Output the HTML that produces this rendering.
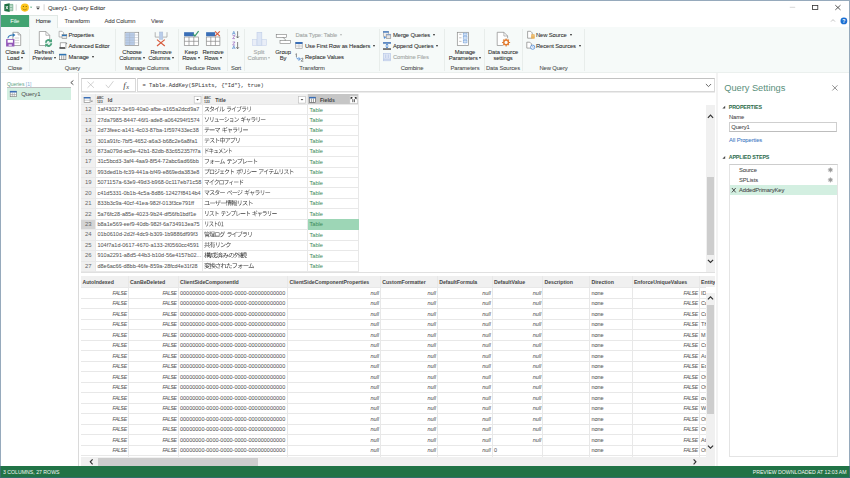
<!DOCTYPE html>
<html>
<head>
<meta charset="utf-8">
<title>Query1 - Query Editor</title>
<style>
*{box-sizing:border-box;margin:0;padding:0}
html,body{width:850px;height:478px;overflow:hidden;background:#fff}
body{font-family:"Liberation Sans",sans-serif;font-size:5.85px;letter-spacing:-.12px;color:#2a2a2a;-webkit-text-stroke:0.06px;position:relative;line-height:1}
.a{position:absolute;white-space:nowrap}
.t{position:absolute;white-space:nowrap;line-height:7px;height:7px}
.c{text-align:center}
.r{text-align:right}
.g{color:#a4a8a6;-webkit-text-stroke:0.1px}
svg{position:absolute;overflow:visible}
/* frame */
#frame{left:0;top:0;width:850px;height:478px;border:1px solid #96aabc;border-bottom:none;z-index:50}
#title{left:1px;top:1px;width:848px;height:14.5px;background:#fff}
#tabs{left:1px;top:15.5px;width:848px;height:11.5px;background:#fff}
#ribbon{left:1px;top:27px;width:848px;height:45.7px;background:#f6faf9;border-bottom:1.1px solid #ebf0ee}
.sep{position:absolute;top:28.5px;width:1px;height:42.5px;background:#e8edeb}
.gl{top:64.6px;color:#4a4a4a}
.tri{position:absolute;width:0;height:0;border-left:1.6px solid transparent;border-right:1.6px solid transparent;border-top:2px solid #333;margin-left:-0.2px;margin-top:-0.2px}
.tr{display:inline-block;width:0;height:0;border-left:1.9px solid transparent;border-right:1.9px solid transparent;border-top:2.3px solid #2a2a2a;margin-left:1.5px;vertical-align:0.5px}
.tr.g{border-top-color:#b5b8b6}
.tr.s{margin-left:2.9px}
/* status */
#status{left:0;top:466.3px;width:850px;height:11.7px;background:#217346;z-index:55}
#status .t{color:#f4f8f5;font-size:5.19px;letter-spacing:0;top:3.1px;-webkit-text-stroke:0;transform:scaleY(1.16);transform-origin:50% 62%}












/*GRIDCSS*/
.hl{height:.7px;background:#e8e8e8}
.vl{width:.7px;background:#e8e8e8}
.hb{font-weight:bold;font-size:5.2px;letter-spacing:0;color:#444;-webkit-text-stroke:0}
.rn{font-size:5.9px;color:#666;letter-spacing:-.15px;-webkit-text-stroke:0}
.ct{font-size:5.5px;letter-spacing:0;color:#595959;-webkit-text-stroke:.05px}
.jp{font-size:5.6px;color:#444;-webkit-text-stroke:0;letter-spacing:-.35px;max-width:101px;overflow:hidden}
.tb{font-size:5.7px;color:#3a8a58;-webkit-text-stroke:0;z-index:3;letter-spacing:0}
/*/GRIDCSS*/
/*G2CSS*/
.it{font-style:italic;letter-spacing:0;font-size:5.5px;color:#595959;-webkit-text-stroke:.05px}
.fa{font-size:5.1px;letter-spacing:-.3px;margin-left:-.1px}
.sh{font-weight:bold;font-size:5.35px;color:#2b6b4b;-webkit-text-stroke:0}
.st{color:#444;-webkit-text-stroke:.05px}
/*/G2CSS*/
</style>
</head>
<body>
<div id="frame" class="a"></div>
<div id="title" class="a"></div>
<div id="tabs" class="a"></div>
<div id="ribbon" class="a"></div>

<!-- TITLEBAR -->
<div id="tb">
<svg style="left:0;top:0" width="850" height="30" viewBox="0 0 850 30">
<g fill="none">
<!-- excel icon -->
<path d="M8.600 4.400h4.200v6.300h-4.200z" fill="#e6f1ea" stroke="#3f8f63" stroke-width=".6"/>
<path d="M9.800 5.900h2.600M9.800 7.500h2.600M9.800 9.100h2.600" stroke="#4a9a6e" stroke-width=".6"/>
<path d="M4.300 4.200l5.300-1v8.700l-5.300-1z" fill="#1f7145"/>
<path d="M5.900 6l2 3.200M7.900 6l-2 3.200" stroke="#fff" stroke-width=".8"/>
<path d="M16.200 4.300v6.300M44.100 4.300v6.300" stroke="#c2c2c2" stroke-width=".7"/>
<!-- smiley -->
<circle cx="24.800" cy="7.600" r="4.100" fill="#fcc41c"/>
<circle cx="23.400" cy="6.500" r=".55" fill="#6b5200"/><circle cx="26.200" cy="6.500" r=".55" fill="#6b5200"/>
<path d="M22.700 8.700c1 1.500 3.200 1.500 4.200 0" stroke="#7a5e00" stroke-width=".55"/>
<path d="M30 6.700h2.200l-1.100 1.300z" fill="#3a9a6a"/>
<path d="M36.200 6.900h3.600" stroke="#444" stroke-width=".6"/>
<path d="M36.300 7.800h3.400l-1.700 1.900z" fill="#444"/>
<!-- window controls -->
<path d="M789.800 7.300h5.400" stroke="#c6c6c6" stroke-width=".7"/>
<rect x="812.600" y="5.500" width="5.200" height="4" stroke="#333" stroke-width=".8"/>
<path d="M835.300 5.200l5.200 4.700M840.500 5.200l-5.200 4.700" stroke="#333" stroke-width=".8"/>
<path d="M831 21.600l2-2 2 2" stroke="#999" stroke-width=".6"/>
<circle cx="843.900" cy="20.900" r="3.400" fill="#1b6fd2"/>
</g>
<text x="843.900" y="22.800" font-family="Liberation Sans" font-weight="bold" font-size="5.200" fill="#fff" text-anchor="middle">?</text>
</svg>
<div class="t" style="left:48px;top:4.6px;font-size:5.87px;letter-spacing:0;color:#333">Query1 - Query Editor</div>
</div>

<!-- TABS -->
<div id="tabrow">
<div class="a" style="left:1px;top:15px;width:27.5px;height:12px;background:#42a371"></div>
<div class="a" style="left:28.5px;top:15px;width:29px;height:12.5px;background:#f6faf9;border:1px solid #e1e8e5;border-bottom:none"></div>
<div class="t c" style="left:1px;width:27.5px;top:18.2px;color:#fff;-webkit-text-stroke:0">File</div>
<div class="t c" style="left:29px;width:28.5px;top:18.2px;color:#333">Home</div>
<div class="t" style="left:64.5px;top:18.2px;color:#444">Transform</div>
<div class="t" style="left:104.5px;top:18.2px;color:#444">Add Column</div>
<div class="t" style="left:151px;top:18.2px;color:#444">View</div>
</div>

<!-- RIBBON -->
<div id="rb">
<div class="sep" style="left:29px"></div>
<div class="sep" style="left:115px"></div>
<div class="sep" style="left:178px"></div>
<div class="sep" style="left:227px"></div>
<div class="sep" style="left:244px"></div>
<div class="sep" style="left:379px"></div>
<div class="sep" style="left:444px"></div>
<div class="sep" style="left:484px"></div>
<div class="sep" style="left:522px"></div>
<div class="sep" style="left:584px"></div>
<!-- Close group -->
<div class="t c" style="left:1px;width:28px;top:48.5px">Close &amp;</div>
<div class="t c" style="left:1px;width:28px;top:54.7px">Load<i class="tr"></i></div>
<div class="t c gl" style="left:1px;width:28px">Close</div>
<!-- Query group -->
<div class="t c" style="left:30px;width:28px;top:48.5px">Refresh</div>
<div class="t c" style="left:30px;width:28px;top:54.7px">Preview<i class="tr"></i></div>
<div class="t" style="left:68.5px;top:31.5px">Properties</div>
<div class="t" style="left:68.5px;top:42.5px">Advanced Editor</div>
<div class="t" style="left:68.5px;top:53.5px">Manage<i class="tr s"></i></div>
<div class="t c gl" style="left:30px;width:85px">Query</div>
<!-- Manage Columns -->
<div class="t c" style="left:117px;width:30px;top:48.5px">Choose</div>
<div class="t c" style="left:117px;width:30px;top:54.7px">Columns<i class="tr"></i></div>
<div class="t c" style="left:146px;width:30px;top:48.5px">Remove</div>
<div class="t c" style="left:146px;width:30px;top:54.7px">Columns<i class="tr"></i></div>
<div class="t c gl" style="left:116px;width:62px">Manage Columns</div>
<!-- Reduce Rows -->
<div class="t c" style="left:176px;width:30px;top:48.5px">Keep</div>
<div class="t c" style="left:176px;width:30px;top:54.7px">Rows<i class="tr"></i></div>
<div class="t c" style="left:198px;width:30px;top:48.5px">Remove</div>
<div class="t c" style="left:198px;width:30px;top:54.7px">Rows<i class="tr"></i></div>
<div class="t c gl" style="left:178px;width:50px">Reduce Rows</div>
<!-- Sort -->
<div class="t c gl" style="left:228px;width:16px">Sort</div>
<!-- Transform -->
<div class="t c g" style="left:244px;width:30px;top:48.5px">Split</div>
<div class="t c g" style="left:244px;width:30px;top:54.7px">Column<i class="tr g"></i></div>
<div class="t c" style="left:268px;width:30px;top:48.5px">Group</div>
<div class="t c" style="left:268px;width:30px;top:54.7px">By</div>
<div class="t g" style="left:295.5px;top:31.5px">Data Type: Table<i class="tr g s"></i></div>
<div class="t" style="left:305px;top:42.5px">Use First Row as Headers<i class="tr s"></i></div>
<div class="t" style="left:305px;top:53.5px">Replace Values</div>
<div class="t c gl" style="left:245px;width:134px">Transform</div>
<!-- Combine -->
<div class="t" style="left:393px;top:31.5px">Merge Queries<i class="tr s"></i></div>
<div class="t" style="left:393px;top:42.5px">Append Queries<i class="tr s"></i></div>
<div class="t g" style="left:393px;top:53.5px">Combine Files</div>
<div class="t c gl" style="left:380px;width:64px">Combine</div>
<!-- Parameters -->
<div class="t c" style="left:445px;width:40px;top:48.5px">Manage</div>
<div class="t c" style="left:445px;width:40px;top:54.7px">Parameters<i class="tr"></i></div>
<div class="t c gl" style="left:445px;width:40px">Parameters</div>
<!-- Data Sources -->
<div class="t c" style="left:484px;width:38px;top:48.5px">Data source</div>
<div class="t c" style="left:484px;width:38px;top:54.7px">settings</div>
<div class="t c gl" style="left:484px;width:38px">Data Sources</div>
<!-- New Query -->
<div class="t" style="left:536px;top:31.5px">New Source<i class="tr s"></i></div>
<div class="t" style="left:536px;top:42.5px">Recent Sources<i class="tr s"></i></div>
<div class="t c gl" style="left:523px;width:61px">New Query</div>
<svg id="ricons" style="left:0;top:0" width="850" height="478" viewBox="0 0 850 478">
<g fill="none" stroke-linecap="butt">
<!-- Close & Load -->
<path d="M12.9 32.3h5.2l2.6 2.6v10.6h-7.8z" fill="#fff" stroke="#8a8a8a" stroke-width=".7"/>
<path d="M18.1 32.3v2.6h2.6" stroke="#8a8a8a" stroke-width=".6"/>
<path d="M14.6 38h4.6M14.6 40.4h4.6M14.6 42.8h4.6" stroke="#c4c4c4" stroke-width=".8"/>
<rect x="6.1" y="39.1" width="8.3" height="7.4" fill="#9258b8"/>
<rect x="7.6" y="39.9" width="5.3" height="2.8" fill="#fff"/>
<rect x="8.6" y="44.3" width="3.2" height="1.6" fill="#e9dcf3"/>
<path d="M7.900 38.300c.3-2.500 2.400-3.400 5.400-3.300" stroke="#2e75b6" stroke-width="1.100"/>
<path d="M12.900 33.200l2.500 1.900-2.500 1.900z" fill="#2e75b6"/>
<!-- Refresh Preview -->
<path d="M39.3 31.5h6.6l3.8 3.8v10.2h-10.4z" fill="#fff" stroke="#8a8a8a" stroke-width=".7"/>
<path d="M45.9 31.5v3.8h3.8" stroke="#8a8a8a" stroke-width=".6"/>
<circle cx="48.6" cy="42.9" r="3.9" fill="#f3f8f6"/>
<path d="M45.900 42.700a2.700 2.700 0 0 1 4.800-1.700" stroke="#4da37e" stroke-width="1.900"/>
<path d="M52 38.800v3.500h-3.500z" fill="#4da37e"/>
<path d="M51.300 43.300a2.700 2.700 0 0 1-4.800 1.700" stroke="#4da37e" stroke-width="1.900"/>
<path d="M45.200 47.200v-3.500h3.500z" fill="#4da37e"/>
<!-- Properties -->
<path d="M59.1 31.3h3l1.5 1.5v4.2h-4.5z" fill="#fff" stroke="#8a8a8a" stroke-width=".6"/>
<rect x="62" y="34.7" width="4.8" height="4" fill="#e8e8e8" stroke="#777" stroke-width=".5"/>
<rect x="62" y="34.7" width="4.8" height="1.4" fill="#2e75b6"/>
<!-- Advanced Editor -->
<path d="M60.3 42.7h5.6v5.6h-5.6z" fill="#fff" stroke="#777" stroke-width=".6"/>
<path d="M65.9 42.7c1 0 1 1.5 0 1.5" stroke="#555" stroke-width=".6"/>
<rect x="59.4" y="47.2" width="5.6" height="1.5" fill="#444"/>
<!-- Manage -->
<rect x="59.5" y="54.2" width="6.4" height="5.5" fill="#fff" stroke="#666" stroke-width=".6"/>
<rect x="59.2" y="53.9" width="7" height="1.5" fill="#2e75b6"/>
<path d="M61.7 55.4v4.3M63.8 55.4v4.3" stroke="#666" stroke-width=".6"/>
<!-- Choose Columns -->
<rect x="125.1" y="32.3" width="13.6" height="13.1" fill="#fff" stroke="#8a8a8a" stroke-width=".7"/>
<rect x="125.5" y="32.7" width="9" height="12.3" fill="#b9cdea"/>
<path d="M125.1 35h13.6M125.1 37.6h13.6M125.1 40.2h13.6M125.1 42.8h13.6" stroke="#a9b4c4" stroke-width=".5"/>
<path d="M129.6 32.3v13.1M134.5 32.3v13.1" stroke="#a9b4c4" stroke-width=".5"/>
<!-- Remove Columns -->
<path d="M155.2 32.2v4.9h4M167 32.2v4.9h-4" stroke="#9a9a9a" stroke-width=".7" fill="none"/>
<rect x="159.4" y="32" width="3.4" height="7.3" fill="#b9cdea" stroke="#a9b9d4" stroke-width=".5"/>
<path d="M157 39.6l7.8 6.4M164.8 39.6l-7.8 6.4" stroke="#d75a3c" stroke-width="1.2"/>
<!-- Keep Rows -->
<rect x="184.3" y="37" width="14.3" height="8.6" fill="#fff" stroke="#8a8a8a" stroke-width=".7"/>
<path d="M184.3 41.3h14.3M189 37v8.6M193.8 37v8.6" stroke="#8a8a8a" stroke-width=".7"/>
<rect x="184.1" y="32.2" width="9.8" height="4" fill="#3a6fb7"/>
<path d="M193 33.9l1.9 2.1 3.7-4.8" stroke="#3d9b6c" stroke-width="1.2"/>
<!-- Remove Rows -->
<rect x="206.3" y="37" width="13.6" height="8.6" fill="#fff" stroke="#8a8a8a" stroke-width=".7"/>
<path d="M206.3 41.3h13.6M210.8 37v8.6M215.4 37v8.6" stroke="#8a8a8a" stroke-width=".7"/>
<rect x="206.1" y="32.2" width="9" height="4" fill="#3a6fb7"/>
<path d="M215 31.4l4.8 4.8M219.8 31.4l-4.8 4.8" stroke="#d75a3c" stroke-width="1.1"/>
<!-- Sort -->
<path d="M237.6 31.2v6.6M236.2 36.4l1.4 1.6 1.4-1.6" stroke="#555" stroke-width=".7"/>
<path d="M237.6 42v6.6M236.2 47.2l1.4 1.6 1.4-1.6" stroke="#555" stroke-width=".7"/>
<path d="M232.4 34.6l1.4-3.3 1.4 3.3M232.9 33.6h1.8" stroke="#5b8fd0" stroke-width=".7"/>
<path d="M232.6 35.6h2.4l-2.4 3h2.4" stroke="#9c6cc2" stroke-width=".7"/>
<path d="M232.6 42h2.4l-2.4 3h2.4" stroke="#9c6cc2" stroke-width=".7"/>
<path d="M232.4 49l1.4-3.3 1.4 3.300M232.900 48h1.800" stroke="#5b8fd0" stroke-width=".7"/>
<!-- Split Column (disabled) -->
<rect x="252.400" y="39.300" width="4.600" height="6.300" fill="#e9eef8" stroke="#c9d5ec" stroke-width=".6"/>
<rect x="261.800" y="39.300" width="4.600" height="6.300" fill="#e9eef8" stroke="#c9d5ec" stroke-width=".6"/>
<rect x="257" y="32.300" width="4.800" height="13.300" fill="#dde6f5" stroke="#bfcde8" stroke-width=".6"/>
<!-- Group By -->
<rect x="276.200" y="34.300" width="10.500" height="3" fill="#fff" stroke="#707070" stroke-width=".55"/>
<rect x="280" y="40.600" width="10.400" height="3.100" fill="#fff" stroke="#707070" stroke-width=".55"/>
<path d="M283 37.300l2.200 2.200v1.100" stroke="#666" stroke-width=".6"/>
<!-- Use First Row as Headers -->
<rect x="295.700" y="42.400" width="6.500" height="6.100" fill="#f4f4f4" stroke="#9a9a9a" stroke-width=".6"/>
<path d="M295.700 46h6.500M299 44v4.500" stroke="#b0b0b0" stroke-width=".5"/>
<rect x="295.400" y="42" width="7.100" height="2" fill="#3a6fb7"/>
<!-- Replace Values -->
<path d="M295.500 54.300l.9-.6v3.300" stroke="#444" stroke-width=".6"/>
<path d="M296.600 57.600c.2 1 .9 1.400 2.800 1.400M298.800 57.400l1.600 1.600-1.600 1.600" stroke="#2e75d0" stroke-width=".9"/>
<path d="M301.300 58.600c.6-1 2.100-.5 1.500.7l-1.600 1.900h2.200" stroke="#444" stroke-width=".6"/>
<!-- Merge Queries -->
<rect x="383.300" y="31.400" width="5.300" height="4.800" fill="#eee" stroke="#8a8a8a" stroke-width=".5"/>
<rect x="383.100" y="31.200" width="5.700" height="1.500" fill="#4a7fc4"/>
<rect x="386.200" y="34.200" width="4.600" height="4.400" fill="#e4e4e4" stroke="#777" stroke-width=".5"/>
<rect x="386" y="34" width="5" height="1.300" fill="#8aa3c8"/>
<path d="M384 37.600h2M385 36.600l-1.200 1 1.200 1" stroke="#2e75d0" stroke-width=".7"/>
<!-- Append Queries -->
<rect x="383" y="42.200" width="8" height="1.500" fill="#3a6fb7"/>
<path d="M383 43.700h8" stroke="#9ab" stroke-width=".4" stroke-dasharray="1.500 .8"/>
<path d="M387 44v4M385.800 45.300l1.200-1.200 1.200 1.200M385.800 46.700l1.200 1.200 1.200-1.200" stroke="#2e75d0" stroke-width=".7"/>
<rect x="383" y="48.300" width="8" height="1.500" fill="#555"/>
<!-- Combine Files -->
<rect x="383.300" y="53.400" width="7.400" height="7.400" fill="#dfe7f6" stroke="#b5c5e6" stroke-width=".6"/>
<path d="M385.700 54.500v3.500M388.300 54.500v3.500M383.300 59.200h7.400" stroke="#a9bbe0" stroke-width=".6"/>
<!-- Manage Parameters -->
<rect x="457.300" y="32.300" width="11.200" height="13.200" fill="#fff" stroke="#8a8a8a" stroke-width=".7"/>
<path d="M459.200 34.300h2.300M459.200 37.800h2.300M459.200 41.400h2.300" stroke="#999" stroke-width=".6"/>
<rect x="463.200" y="33.100" width="3.800" height="2.600" fill="#d8e6f8" stroke="#6a9bd8" stroke-width=".5"/>
<rect x="463.200" y="36.700" width="3.800" height="2.600" fill="#d8e6f8" stroke="#6a9bd8" stroke-width=".5"/>
<rect x="463.200" y="40.300" width="3.800" height="2.600" fill="#d8e6f8" stroke="#6a9bd8" stroke-width=".5"/>
<path d="M465.100 32.300v13.200" stroke="#b8cce8" stroke-width=".4"/>
<!-- Data source settings -->
<path d="M497.200 32.300h6.700l3.700 3.700v9.500h-10.400z" fill="#fff" stroke="#8a8a8a" stroke-width=".7"/>
<path d="M503.900 32.300v3.700h3.700" stroke="#8a8a8a" stroke-width=".6"/>
<circle cx="506.100" cy="42.400" r="4.400" fill="#f3f8f6"/>
<circle cx="506.100" cy="42.400" r="2.300" stroke="#e27b2f" stroke-width="1.500"/>
<path d="M506.100 38.400v8M502.100 42.400h8M503.300 39.600l5.600 5.600M508.900 39.600l-5.600 5.600" stroke="#e27b2f" stroke-width="1.050"/>
<circle cx="506.100" cy="42.400" r="1.550" fill="#fdfdfb"/>
<!-- New Source -->
<path d="M527.600 31.300h3l1.600 1.600v5.300h-4.600z" fill="#fff" stroke="#7a7a7a" stroke-width=".65"/>
<rect x="531.100" y="34.300" width="3.700" height="4.400" rx=".8" fill="#e9b25c"/>
<path d="M531.100 35.800h3.700" stroke="#f6dcae" stroke-width=".5"/>
<!-- Recent Sources -->
<path d="M526.800 42.200h3l1.600 1.600v4.300h-4.600z" fill="#fff" stroke="#7a7a7a" stroke-width=".65"/>
<circle cx="532.700" cy="47.200" r="2.100" fill="#fff" stroke="#4a86d4" stroke-width=".8"/>
<path d="M532.700 46v1.300h1" stroke="#4a86d4" stroke-width=".5"/>
</g>
</svg>

</div>

<!-- LEFT PANE -->
<div id="left">
<!--LEFT-->
<div class="a" style="left:78.4px;top:73px;width:.8px;height:393.3px;background:#dadada"></div>
<div class="t" style="left:6.9px;top:81.1px;font-size:5.0px;letter-spacing:0;color:#5c9f7f;-webkit-text-stroke:0">Queries <span style="color:#7fa9d6">[1]</span></div>
<div class="a" style="left:6.9px;top:86.9px;width:64.1px;height:.65px;background:#c0c0c0"></div>
<div class="a" style="left:6.9px;top:87.6px;width:64.1px;height:12.1px;background:#d3efe1"></div>
<div class="t" style="left:21.2px;top:90.2px;font-size:6.1px;color:#4a4a4a;-webkit-text-stroke:0">Query1</div>
<svg style="left:0;top:0" width="100" height="110" viewBox="0 0 100 110"><g fill="none">
<rect x="10.200" y="91.300" width="6.200" height="5.400" fill="#fff" stroke="#777" stroke-width=".6"/>
<path d="M12.300 92.500v4.200M14.300 92.500v4.200M10.200 94.600h6.200" stroke="#888" stroke-width=".5"/>
<rect x="9.900" y="90.900" width="6.800" height="1.600" fill="#3a6fb7"/>
<path d="M73.400 80.500l-2.600 2.100 2.600 2.100" stroke="#444" stroke-width=".9"/>
</g></svg>
<!--/LEFT-->
</div>

<!-- CENTER -->
<div id="center">
<!--CENTER-->
<div class="a" style="left:81.1px;top:78.3px;width:54.6px;height:13.4px;border:1px solid #d9d9d9;border-top-color:#c2c2c2;background:#fff"></div>
<div class="a" style="left:137.4px;top:78.3px;width:577.3px;height:13.4px;border:1px solid #d9d9d9;border-top-color:#c2c2c2;background:#fff"></div>
<div class="t" style="left:142.4px;top:82.2px;font-family:'Liberation Mono',monospace;font-size:5.47px;letter-spacing:0;color:#444;-webkit-text-stroke:.05px">= Table.AddKey(SPLists, {"Id"}, true)</div>
<svg style="left:0;top:0" width="850" height="110" viewBox="0 0 850 110"><g fill="none">
<path d="M87.500 81.600l6.400 6.200M93.900 81.600l-6.400 6.200" stroke="#bdbdbd" stroke-width=".7"/>
<path d="M105.800 84.800l2.600 3 5-6.600" stroke="#bdbdbd" stroke-width=".7"/>
<path d="M705.900 84l2.600 2.600 2.600-2.600" stroke="#444" stroke-width=".8"/>
</g>
<text x="123.300" y="87.500" font-family="Liberation Serif" font-style="italic" font-size="9" fill="#444">f</text>
<text x="126.200" y="88.600" font-family="Liberation Serif" font-style="italic" font-size="6.200" fill="#444">x</text>
</svg>
<div class="a" style="left:80.8px;top:94.2px;width:277.8px;height:10.1px;background:#f0f0f0"></div>
<div class="a" style="left:80.8px;top:104.3px;width:14.7px;height:167.0px;background:#f0f0f0"></div>
<div class="a" style="left:307.6px;top:94.2px;width:51.0px;height:10.1px;background:#c6c6c6"></div>
<div class="a" style="left:307.8px;top:219.04px;width:51.2px;height:10.84px;background:#9dd6b6;z-index:2"></div>
<div class="a" style="left:80.8px;top:219.44px;width:14.7px;height:10.14px;background:#d4d4d4"></div>
<div class="a hl" style="left:80.8px;top:103.95px;width:277.8px"></div>
<div class="a hl" style="left:80.8px;top:114.39px;width:277.8px"></div>
<div class="a hl" style="left:80.8px;top:124.83px;width:277.8px"></div>
<div class="a hl" style="left:80.8px;top:135.27px;width:277.8px"></div>
<div class="a hl" style="left:80.8px;top:145.71px;width:277.8px"></div>
<div class="a hl" style="left:80.8px;top:156.15px;width:277.8px"></div>
<div class="a hl" style="left:80.8px;top:166.59px;width:277.8px"></div>
<div class="a hl" style="left:80.8px;top:177.03px;width:277.8px"></div>
<div class="a hl" style="left:80.8px;top:187.47px;width:277.8px"></div>
<div class="a hl" style="left:80.8px;top:197.91px;width:277.8px"></div>
<div class="a hl" style="left:80.8px;top:208.35px;width:277.8px"></div>
<div class="a hl" style="left:80.8px;top:218.79px;width:277.8px"></div>
<div class="a hl" style="left:80.8px;top:229.23px;width:277.8px"></div>
<div class="a hl" style="left:80.8px;top:239.67px;width:277.8px"></div>
<div class="a hl" style="left:80.8px;top:250.11px;width:277.8px"></div>
<div class="a hl" style="left:80.8px;top:260.55px;width:277.8px"></div>
<div class="a hl" style="left:80.8px;top:270.99px;width:277.8px"></div>
<div class="a vl" style="left:95.15px;top:94.2px;height:177.1px"></div>
<div class="a vl" style="left:202.25px;top:94.2px;height:177.1px"></div>
<div class="a vl" style="left:306.85px;top:94.2px;height:177.1px"></div>
<div class="a vl" style="left:358.25px;top:94.2px;height:177.1px"></div>
<div class="t hb" style="left:107.7px;top:96.5px">Id</div>
<div class="t hb" style="left:215.3px;top:96.5px">Title</div>
<div class="t hb" style="left:319.9px;top:96.5px">Fields</div>
<svg style="left:0;top:0" width="850" height="110" viewBox="0 0 850 110"><g fill="none">
<rect x="84.100" y="97.600" width="6" height="5" fill="#fff" stroke="#7a7a7a" stroke-width=".6"/>
<path d="M84.100 100.200h6" stroke="#9a9a9a" stroke-width=".5"/>
<rect x="83.800" y="97" width="6.600" height="1.500" fill="#3a6fb7"/>
<path d="M90.900 100.700h2l-1 1.200z" fill="#555"/>
<rect x="194.200" y="96.300" width="6.800" height="6.800" fill="#fff" stroke="#b9b9b9" stroke-width=".6"/>
<path d="M196.200 98.900h2.800l-1.400 1.600z" fill="#444"/>
<rect x="298.600" y="96.300" width="6.800" height="6.800" fill="#fff" stroke="#b9b9b9" stroke-width=".6"/>
<path d="M300.600 98.900h2.800l-1.400 1.600z" fill="#444"/>
<rect x="350" y="96.200" width="7.200" height="7" fill="#fff" stroke="#d8d8d8" stroke-width=".5"/>
<path d="M352.800 102.200v-2.600l-1.400-1.500M354.400 102.200v-2.600l1.400-1.500" stroke="#333" stroke-width=".8"/><path d="M350.600 99.400v-2.300h2.300zM356.600 99.400v-2.300h-2.300z" fill="#333"/>
<rect x="309.400" y="97.400" width="6" height="5" fill="#fff" stroke="#555" stroke-width=".6"/>
<path d="M311.400 98.500v3.900M313.400 98.500v3.900" stroke="#555" stroke-width=".6"/>
<rect x="309.100" y="96.900" width="6.600" height="1.500" fill="#3a6fb7"/>
</g>
<g font-family="Liberation Sans" font-weight="bold" fill="#555" font-size="3.400">
<text x="96.700" y="98.700">ABC</text><text x="96.900" y="102.900" font-size="3.600">123</text>
<text x="203.900" y="98.700">ABC</text><text x="204.100" y="102.900" font-size="3.600">123</text>
</g></svg>
<div class="t rn c" style="left:80.8px;width:14.7px;top:106.20px">12</div>
<div class="t ct" style="left:97.5px;top:106.20px">1af43027-3e69-40a0-afbe-a165a2dcd9a7</div>
<div class="t tb" style="left:309.4px;top:106.50px">Table</div>
<div class="t rn c" style="left:80.8px;width:14.7px;top:116.64px">13</div>
<div class="t ct" style="left:97.5px;top:116.64px">27da7985-8447-46f1-ade8-a064294f1574</div>
<div class="t tb" style="left:309.4px;top:116.94px">Table</div>
<div class="t rn c" style="left:80.8px;width:14.7px;top:127.08px">14</div>
<div class="t ct" style="left:97.5px;top:127.08px">2d73feec-a141-4c03-87ba-1f597433ec38</div>
<div class="t tb" style="left:309.4px;top:127.38px">Table</div>
<div class="t rn c" style="left:80.8px;width:14.7px;top:137.52px">15</div>
<div class="t ct" style="left:97.5px;top:137.52px">301a91fc-7bf5-4652-a6a3-b68c2e6a8fa1</div>
<div class="t tb" style="left:309.4px;top:137.82px">Table</div>
<div class="t rn c" style="left:80.8px;width:14.7px;top:147.96px">16</div>
<div class="t ct" style="left:97.5px;top:147.96px">873a079d-ac9e-42b1-82db-83c652357f7a</div>
<div class="t tb" style="left:309.4px;top:148.26px">Table</div>
<div class="t rn c" style="left:80.8px;width:14.7px;top:158.40px">17</div>
<div class="t ct" style="left:97.5px;top:158.40px">31c5bcd3-3af4-4aa9-8f54-72abc6ad66bb</div>
<div class="t tb" style="left:309.4px;top:158.70px">Table</div>
<div class="t rn c" style="left:80.8px;width:14.7px;top:168.84px">18</div>
<div class="t ct" style="left:97.5px;top:168.84px">993ded1b-fc39-441a-bf49-e869eda383e8</div>
<div class="t tb" style="left:309.4px;top:169.14px">Table</div>
<div class="t rn c" style="left:80.8px;width:14.7px;top:179.28px">19</div>
<div class="t ct" style="left:97.5px;top:179.28px">5071157a-63e9-49d3-b968-0c117eb71c58</div>
<div class="t tb" style="left:309.4px;top:179.58px">Table</div>
<div class="t rn c" style="left:80.8px;width:14.7px;top:189.72px">20</div>
<div class="t ct" style="left:97.5px;top:189.72px">c41d5331-0b1b-4c5a-8d86-12427f8414b4</div>
<div class="t tb" style="left:309.4px;top:190.02px">Table</div>
<div class="t rn c" style="left:80.8px;width:14.7px;top:200.16px">21</div>
<div class="t ct" style="left:97.5px;top:200.16px">833b3c9a-40cf-41ea-982f-013f3ce791ff</div>
<div class="t tb" style="left:309.4px;top:200.46px">Table</div>
<div class="t rn c" style="left:80.8px;width:14.7px;top:210.60px">22</div>
<div class="t ct" style="left:97.5px;top:210.60px">5a76fc28-a85e-4023-9b24-df56fb1bdf1e</div>
<div class="t tb" style="left:309.4px;top:210.90px">Table</div>
<div class="t rn c" style="left:80.8px;width:14.7px;top:221.04px">23</div>
<div class="t ct" style="left:97.5px;top:221.04px">b8a1e569-eef9-40db-982f-6a734913ea75</div>
<div class="t tb" style="left:309.4px;top:221.34px">Table</div>
<div class="t rn c" style="left:80.8px;width:14.7px;top:231.48px">24</div>
<div class="t ct" style="left:97.5px;top:231.48px">01b0610d-2d2f-4dc9-b309-1b9886df99f3</div>
<div class="t tb" style="left:309.4px;top:231.78px">Table</div>
<div class="t rn c" style="left:80.8px;width:14.7px;top:241.92px">25</div>
<div class="t ct" style="left:97.5px;top:241.92px">104f7a1d-0617-4670-a133-2f0560cc4591</div>
<div class="t tb" style="left:309.4px;top:242.22px">Table</div>
<div class="t rn c" style="left:80.8px;width:14.7px;top:252.36px">26</div>
<div class="t ct" style="left:97.5px;top:252.36px">910a2291-a8d5-44b3-b10d-56e4157b02...</div>
<div class="t tb" style="left:309.4px;top:252.66px">Table</div>
<div class="t rn c" style="left:80.8px;width:14.7px;top:262.80px">27</div>
<div class="t ct" style="left:97.5px;top:262.80px">d8e6ac66-d8bb-46fe-859a-28fcd4e31f28</div>
<div class="t tb" style="left:309.4px;top:263.10px">Table</div>
<svg style="left:0;top:0" width="400" height="280" viewBox="0 0 400 280"><g fill="#3c3c3c">
<path transform="translate(204 111.41) scale(0.0586 -0.0630)" d="M80 67L75 71L72 70L67 70L48 70L29 70L23 70L19 71L19 62L23 62L29 62L48 62L68 62L61 48L51 34L33 17L10 4L16 -2L37 11L55 27L70 12L83 -3L90 3L77 18L61 33L70 48L78 62L79 65L80 67ZM140 78L130 81L129 77L127 74L116 57L95 39L102 34L117 46L128 60L162 60L157 46L149 32L138 39L128 46L122 40L132 34L143 26L127 12L105 2L112 -4L134 7L150 21L156 16L161 12L167 19L161 23L155 28L165 44L171 59L172 61L173 64L167 68L164 67L160 67L133 67L135 71L137 74L140 78ZM181 36L185 28L205 36L223 45L223 8L223 2L222 -3L232 -3L231 2L231 8L231 50L246 61L258 72L252 78L239 66L224 55L205 45L181 36ZM310 2L316 -2L317 -1L319 0L337 12L353 28L348 34L334 20L319 10L319 38L319 68L319 72L320 75L310 75L311 72L311 68L311 37L311 8L311 5L310 2ZM265 3L272 -2L283 10L290 25L292 46L293 68L293 72L294 75L284 75L285 71L285 67L285 47L282 27L275 14L265 3ZM400 74L400 66L404 66L409 66L429 66L448 66L453 66L458 66L458 74L453 74L448 74L429 74L409 74L404 74L400 74ZM465 48L459 52L457 51L454 51L427 51L401 51L396 51L391 52L391 43L396 43L401 43L428 43L454 43L450 32L442 21L427 10L407 3L413 -4L432 3L449 17L458 30L464 45L464 47L465 48ZM472 36L476 28L496 36L514 45L514 8L514 2L513 -3L523 -3L522 2L522 8L522 50L537 61L549 72L543 78L530 66L515 55L496 45L472 36ZM637 86L632 83L636 77L640 70L646 72L642 79L637 86ZM634 65L629 68L632 70L629 77L625 83L619 81L623 75L626 69L624 69L622 68L598 68L572 68L567 69L562 69L562 60L566 60L572 61L598 61L623 61L619 44L610 28L595 14L571 4L578 -4L601 8L617 23L627 42L632 60L633 63L634 65ZM658 74L658 66L662 66L667 66L687 66L706 66L711 66L716 66L716 74L711 74L706 74L687 74L667 74L662 74L658 74ZM723 48L717 52L715 51L712 51L685 51L659 51L654 51L649 52L649 43L654 43L659 43L686 43L712 43L708 32L700 21L685 10L665 3L671 -4L690 3L707 17L716 30L722 45L722 47L723 48ZM799 76L789 76L790 72L790 67L790 59L790 51L788 30L781 16L771 8L758 3L764 -4L776 1L788 10L796 25L798 51L798 59L798 67L798 72L799 76ZM752 75L743 75L743 71L744 68L744 52L744 35L743 30L743 27L752 27L752 30L752 34L752 52L752 68L752 72L752 75Z"/>
<path transform="translate(204 121.85) scale(0.0575 -0.0630)" d="M26 4L34 -3L55 11L69 28L78 46L83 64L84 67L85 72L75 73L75 69L74 65L70 49L62 32L48 16L26 4ZM20 72L12 68L21 55L29 39L37 44L29 58L20 72ZM164 76L154 76L155 72L155 67L155 59L155 51L153 30L146 16L136 8L122 3L129 -4L141 1L153 10L161 25L163 51L163 59L163 67L163 72L164 76ZM117 75L108 75L108 71L108 68L108 52L108 35L108 30L108 27L117 27L117 30L117 34L117 52L117 68L117 72L117 75ZM187 9L187 1L191 1L195 1L222 1L250 1L254 1L258 1L258 9L254 9L250 9L240 9L243 27L245 44L245 46L246 48L240 50L237 50L235 50L219 50L204 50L200 50L196 50L196 42L200 42L204 42L219 42L236 42L234 27L231 9L195 9L191 9L187 9ZM268 43L268 34L274 34L282 34L310 34L337 34L343 34L348 34L348 43L343 43L337 43L310 43L282 43L274 43L268 43ZM374 77L370 70L381 63L391 56L396 63L386 70L374 77ZM359 5L364 -3L380 2L397 10L419 26L435 45L430 54L415 34L393 17L376 10L359 5ZM359 54L355 48L366 41L376 34L381 41L371 48L359 54ZM451 6L451 -2L455 -2L459 -2L500 -2L500 -6L507 -6L507 -3L507 0L507 27L507 50L507 52L507 55L505 55L501 54L481 54L462 54L457 55L452 55L452 47L457 47L462 47L482 47L500 47L500 31L463 31L458 31L454 31L454 23L458 24L464 24L500 24L500 6L459 6L455 6L451 6ZM539 73L533 67L546 57L558 46L564 53L552 63L539 73ZM530 6L535 -2L558 5L575 14L595 30L608 49L604 58L590 38L570 21L553 12L530 6ZM710 81L705 79L709 72L713 65L718 68L714 75L710 81ZM721 85L716 83L720 76L724 69L730 72L726 78L721 85ZM644 26L646 17L649 18L654 19L681 23L685 3L686 -1L687 -6L696 -5L695 0L693 4L689 25L714 28L719 29L723 30L721 38L718 37L712 36L688 32L684 52L707 56L711 56L714 57L713 65L710 64L706 64L696 62L682 60L680 70L680 74L679 77L670 76L671 73L672 69L674 58L661 56L652 55L648 55L644 54L646 46L650 47L654 47L676 51L680 31L664 28L653 27L648 26L644 26ZM808 48L802 51L801 50L799 50L785 47L764 43L761 55L760 58L760 61L751 59L752 56L753 53L757 42L744 39L740 39L736 38L738 31L758 35L768 -2L769 -5L770 -9L778 -7L777 -3L776 0L772 14L766 36L796 42L789 32L779 22L786 18L798 32L808 48ZM830 74L830 66L834 66L839 66L859 66L878 66L883 66L888 66L888 74L883 74L878 74L859 74L839 74L834 74L830 74ZM895 48L889 52L887 51L884 51L857 51L831 51L826 51L821 52L821 43L826 43L831 43L858 43L884 43L880 32L872 21L857 10L837 3L843 -4L862 3L879 17L888 30L894 45L894 47L895 48ZM971 76L961 76L962 72L962 67L962 59L962 51L960 30L953 16L943 8L930 3L936 -4L948 1L960 10L968 25L970 51L970 59L970 67L970 72L971 76ZM924 75L915 75L915 71L916 68L916 52L916 35L915 30L915 27L924 27L924 30L924 34L924 52L924 68L924 72L924 75ZM989 43L989 34L995 34L1003 34L1031 34L1058 34L1064 34L1069 34L1069 43L1064 43L1058 43L1030 43L1003 43L995 43L989 43Z"/>
<path transform="translate(204 132.29) scale(0.0606 -0.0630)" d="M22 74L22 66L26 66L31 66L51 66L71 66L76 66L80 66L80 74L76 74L71 73L51 73L30 73L26 74L22 74ZM10 49L10 41L14 41L18 41L48 41L47 28L42 16L34 7L24 1L31 -5L43 3L51 14L55 26L56 41L84 41L88 41L92 41L92 49L87 48L84 48L51 48L18 48L14 49L10 49ZM96 43L96 34L102 34L110 34L138 34L165 34L171 34L176 34L176 43L171 43L165 43L138 43L110 43L102 43L96 43ZM218 16L228 5L236 -4L243 1L235 10L226 20L248 40L262 60L264 62L265 63L259 68L256 68L252 68L220 68L192 68L187 68L182 68L182 60L187 60L192 60L221 60L251 60L239 44L220 25L210 34L201 41L195 36L206 27L218 16ZM366 81L361 79L365 72L369 65L374 68L370 75L366 81ZM377 85L372 83L376 76L380 69L386 72L382 78L377 85ZM300 26L302 17L305 18L310 19L337 23L341 3L342 -1L343 -6L352 -5L351 0L349 4L345 25L370 28L375 29L379 30L377 38L374 37L368 36L344 32L340 52L363 56L367 56L370 57L369 65L366 64L362 64L352 62L338 60L336 70L336 74L335 77L326 76L327 73L328 69L330 58L317 56L308 55L304 55L300 54L302 46L306 47L310 47L332 51L336 31L320 28L309 27L304 26L300 26ZM464 48L458 51L457 50L455 50L441 47L420 43L417 55L416 58L416 61L407 59L408 56L409 53L413 42L400 39L396 39L392 38L394 31L414 35L424 -2L425 -5L426 -9L434 -7L433 -3L432 0L428 14L422 36L452 42L445 32L435 22L442 18L454 32L464 48ZM486 74L486 66L490 66L495 66L515 66L534 66L539 66L544 66L544 74L539 74L534 74L515 74L495 74L490 74L486 74ZM551 48L545 52L543 51L540 51L513 51L487 51L482 51L477 52L477 43L482 43L487 43L514 43L540 43L536 32L528 21L513 10L493 3L499 -4L518 3L535 17L544 30L550 45L550 47L551 48ZM627 76L617 76L618 72L618 67L618 59L618 51L616 30L609 16L599 8L586 3L592 -4L604 1L616 10L624 25L626 51L626 59L626 67L626 72L627 76ZM580 75L571 75L571 71L572 68L572 52L572 35L571 30L571 27L580 27L580 30L580 34L580 52L580 68L580 72L580 75ZM645 43L645 34L651 34L659 34L687 34L714 34L720 34L725 34L725 43L720 43L714 43L686 43L659 43L651 43L645 43Z"/>
<path transform="translate(204 142.73) scale(0.0598 -0.0630)" d="M22 74L22 66L26 66L31 66L51 66L71 66L76 66L80 66L80 74L76 74L71 73L51 73L30 73L26 74L22 74ZM10 49L10 41L14 41L18 41L48 41L47 28L42 16L34 7L24 1L31 -5L43 3L51 14L55 26L56 41L84 41L88 41L92 41L92 49L87 48L84 48L51 48L18 48L14 49L10 49ZM166 67L161 71L158 70L153 70L134 70L115 70L109 70L105 71L105 62L109 62L115 62L134 62L154 62L147 48L137 34L119 17L96 4L102 -2L123 11L141 27L156 12L169 -3L176 3L163 18L147 33L156 48L164 62L165 65L166 67ZM206 9L206 3L205 -3L215 -3L214 3L214 9L214 42L234 35L253 26L257 34L236 43L214 51L214 67L214 72L215 77L205 77L206 72L206 67L206 37L206 9ZM304 84L304 66L268 66L268 19L275 19L275 25L304 25L304 -8L312 -8L312 25L340 25L340 19L348 19L348 66L312 66L312 84ZM275 32L275 59L304 59L304 32ZM340 32L312 32L312 59L340 59ZM437 68L432 72L429 72L425 72L396 72L368 72L362 72L356 73L356 64L362 64L368 64L395 64L425 64L416 53L403 42L410 36L425 51L434 64L436 66L437 68ZM397 54L388 54L389 51L389 47L386 24L371 7L366 4L362 2L369 -4L393 20L397 54ZM510 72L512 77L517 78L522 77L524 72L522 67L517 65L512 67L510 72ZM506 72L506 70L506 69L503 68L479 68L453 68L448 69L443 69L443 60L447 60L453 61L479 61L504 61L500 44L491 28L476 14L452 4L459 -4L482 8L498 23L508 42L513 60L513 61L515 61L517 61L525 64L528 72L525 80L517 83L509 80L506 72ZM594 76L584 76L585 72L585 67L585 59L585 51L583 30L576 16L566 8L552 3L559 -4L571 1L583 10L591 25L593 51L593 59L593 67L593 72L594 76ZM547 75L538 75L538 71L538 68L538 52L538 35L538 30L538 27L547 27L547 30L547 34L547 52L547 68L547 72L547 75Z"/>
<path transform="translate(204 153.17) scale(0.0543 -0.0630)" d="M66 72L60 70L65 62L69 54L75 57L70 65L66 72ZM78 77L72 74L77 67L82 59L87 62L82 70L78 77ZM30 8L30 1L30 -4L40 -4L39 2L39 8L39 40L59 33L78 24L82 33L61 42L39 49L39 66L39 71L40 76L30 76L30 71L30 66L30 36L30 8ZM97 27L98 19L102 20L107 20L118 22L134 25L138 5L139 0L140 -4L149 -3L147 2L146 6L142 26L167 30L172 31L176 32L174 40L170 39L165 38L141 34L137 54L160 58L164 58L167 59L166 67L162 66L158 65L149 64L135 61L133 72L133 76L132 79L123 78L124 74L125 71L127 60L114 58L105 57L101 57L97 56L99 47L103 48L107 49L129 53L133 32L117 30L106 28L101 28L97 27ZM187 9L187 1L191 1L195 1L222 1L250 1L254 1L258 1L258 9L254 9L250 9L240 9L243 27L245 44L245 46L246 48L240 50L237 50L235 50L219 50L204 50L200 50L196 50L196 42L200 42L204 42L219 42L236 42L234 27L231 9L195 9L191 9L187 9ZM286 61L281 55L296 45L309 35L292 17L269 3L276 -3L299 12L316 29L328 18L339 6L345 13L334 25L321 36L329 51L336 66L337 69L339 73L330 76L329 72L328 69L322 55L314 41L300 51L286 61ZM367 73L361 67L374 57L386 46L392 53L380 63L367 73ZM358 6L363 -2L386 5L403 14L423 30L436 49L432 58L418 38L398 21L381 12L358 6ZM464 9L464 3L463 -3L473 -3L472 3L472 9L472 42L492 35L511 26L515 34L494 43L472 51L472 67L472 72L473 77L463 77L464 72L464 67L464 37L464 9Z"/>
<path transform="translate(204 163.61) scale(0.0597 -0.0630)" d="M86 66L80 70L77 70L75 70L50 70L24 70L19 70L14 70L14 62L19 62L24 62L50 62L76 62L71 46L62 29L47 15L24 5L30 -2L53 9L70 25L79 43L85 62L85 64L86 66ZM103 8L109 2L129 16L144 32L144 4L143 2L141 1L136 1L129 2L130 -6L137 -6L144 -6L150 -4L152 1L151 39L166 39L169 39L172 39L172 47L169 46L165 46L151 46L151 54L151 58L151 61L143 61L143 58L143 54L144 46L114 46L110 46L106 47L106 39L110 39L114 39L140 39L125 23L103 8ZM182 43L182 34L188 34L196 34L224 34L251 34L257 34L262 34L262 43L257 43L251 43L224 43L196 43L188 43L182 43ZM275 11L270 11L265 11L267 2L271 2L275 3L306 6L338 10L341 3L343 -3L351 0L341 21L329 41L322 38L328 29L334 17L313 15L289 12L299 40L307 65L309 71L310 75L300 77L300 73L298 67L290 41L280 11ZM398 74L398 66L403 66L408 66L428 66L448 66L453 66L457 66L457 74L453 74L448 73L428 73L408 73L403 74L398 74ZM386 49L386 41L391 41L395 41L425 41L424 28L419 16L411 7L400 1L408 -5L420 3L428 14L432 26L434 41L461 41L465 41L468 41L468 49L464 48L461 48L428 48L395 48L391 49L386 49ZM486 73L480 67L493 57L505 46L511 53L499 63L486 73ZM477 6L482 -2L505 5L522 14L542 30L555 49L550 58L537 38L517 21L500 12L477 6ZM630 72L631 77L636 78L641 77L643 72L641 67L636 65L631 67L630 72ZM625 72L625 70L625 69L622 68L598 68L572 68L567 69L562 69L562 60L566 60L572 61L598 61L623 61L619 44L610 28L595 14L571 4L578 -4L601 8L617 23L627 42L632 60L632 61L634 61L636 61L644 64L647 72L644 80L636 83L628 80L625 72ZM657 3L663 -2L665 -1L667 0L701 15L726 36L721 43L696 21L666 9L666 35L666 65L667 70L667 74L657 74L658 70L658 65L658 35L658 8L658 6L657 3ZM731 43L731 34L737 34L745 34L773 34L800 34L806 34L811 34L811 43L806 43L800 43L772 43L745 43L737 43L731 43ZM841 9L841 3L840 -3L850 -3L849 3L849 9L849 42L869 35L888 26L892 34L871 43L849 51L849 67L849 72L850 77L840 77L841 72L841 67L841 37L841 9Z"/>
<path transform="translate(204 174.05) scale(0.0586 -0.0630)" d="M80 72L82 77L87 78L92 77L94 72L92 67L87 65L82 67L80 72ZM76 72L76 70L76 69L73 68L49 68L23 68L18 69L13 69L13 60L17 60L23 61L49 61L74 61L70 44L61 28L46 14L22 4L29 -4L52 8L68 23L78 42L83 60L83 61L85 61L87 61L95 64L98 72L95 80L87 83L79 80L76 72ZM101 68L101 65L101 61L101 36L101 12L101 5L100 -1L109 -1L109 5L164 5L163 -1L172 -1L172 5L172 11L172 36L172 61L172 65L172 68L167 68L163 68L137 68L110 68L106 68L101 68ZM109 13L109 60L164 60L164 13ZM244 75L238 72L243 65L247 56L253 59L248 67L244 75ZM257 79L251 77L256 70L261 62L266 64L262 72L257 79ZM201 76L196 69L208 62L218 55L223 62L212 69L201 76ZM186 5L190 -4L207 1L224 9L246 25L262 45L257 53L242 33L219 16L203 9L186 5ZM186 54L181 47L193 40L203 33L208 40L197 47L186 54ZM274 8L274 -1L277 0L281 0L336 0L339 0L343 -1L343 8L340 7L336 7L312 7L312 44L331 44L335 44L338 44L338 52L335 51L331 51L285 51L282 51L278 52L278 44L282 44L285 44L304 44L304 7L281 7L277 7L274 8ZM398 78L388 81L387 76L385 73L374 56L354 39L361 34L375 46L386 58L420 58L414 43L404 27L388 13L364 2L371 -4L395 8L411 23L422 40L429 57L430 60L431 62L424 67L422 66L418 66L391 66L393 70L395 73L398 78ZM464 9L464 3L463 -3L473 -3L472 3L472 9L472 42L492 35L511 26L515 34L494 43L472 51L472 67L472 72L473 77L463 77L464 72L464 67L464 37L464 9ZM624 74L626 78L631 80L635 78L637 74L635 69L631 68L626 69L624 74ZM620 74L623 66L631 63L639 66L642 74L639 82L631 85L623 82L620 74ZM581 37L574 40L566 26L555 14L562 9L572 22L581 37ZM623 40L616 36L625 24L633 10L640 14L632 27L623 40ZM558 60L558 52L562 52L567 52L594 52L594 51L594 29L594 7L594 4L591 3L585 4L579 4L580 -4L587 -4L594 -4L601 -2L603 4L603 27L603 51L603 52L629 52L633 52L637 52L637 60L633 60L629 60L603 60L603 70L603 74L603 77L594 77L594 74L594 70L594 60L567 60L562 60L558 60ZM713 76L703 76L704 72L704 67L704 59L704 51L702 30L695 16L685 8L672 3L678 -4L690 1L702 10L710 25L712 51L712 59L712 67L712 72L713 76ZM666 75L657 75L657 71L658 68L658 52L658 35L657 30L657 27L666 27L666 30L666 34L666 52L666 68L666 72L666 75ZM751 77L747 70L758 63L768 56L773 63L763 70L751 77ZM736 5L741 -3L757 2L774 10L796 26L812 45L808 54L792 34L770 17L753 10L736 5ZM736 54L732 48L743 41L753 34L758 41L748 48L736 54ZM817 43L817 34L823 34L831 34L859 34L886 34L892 34L897 34L897 43L892 43L886 43L858 43L831 43L823 43L817 43ZM1019 68L1014 72L1011 72L1007 72L978 72L950 72L944 72L938 73L938 64L944 64L950 64L977 64L1007 64L998 53L985 42L992 36L1007 51L1016 64L1018 66L1019 68ZM979 54L970 54L971 51L971 47L968 24L953 7L948 4L944 2L951 -4L975 20L979 54ZM1021 36L1025 28L1045 36L1063 45L1063 8L1063 2L1062 -3L1072 -3L1071 2L1071 8L1071 50L1086 61L1098 72L1092 78L1079 66L1064 55L1045 45L1021 36ZM1120 74L1120 66L1124 66L1129 66L1149 66L1169 66L1174 66L1178 66L1178 74L1174 74L1169 73L1149 73L1128 73L1124 74L1120 74ZM1108 49L1108 41L1112 41L1116 41L1146 41L1145 28L1140 16L1132 7L1122 1L1129 -5L1141 3L1149 14L1153 26L1154 41L1182 41L1186 41L1190 41L1190 49L1185 48L1182 48L1149 48L1116 48L1112 49L1108 49ZM1201 11L1196 11L1191 11L1193 2L1197 2L1201 3L1232 6L1264 10L1267 3L1269 -3L1277 0L1267 21L1255 41L1248 38L1254 29L1260 17L1239 15L1215 12L1225 40L1233 65L1235 71L1236 75L1226 77L1226 73L1224 67L1216 41L1206 11ZM1348 76L1338 76L1339 72L1339 67L1339 59L1339 51L1337 30L1330 16L1320 8L1306 3L1313 -4L1325 1L1337 10L1345 25L1347 51L1347 59L1347 67L1347 72L1348 76ZM1301 75L1292 75L1292 71L1292 68L1292 52L1292 35L1292 30L1292 27L1301 27L1301 30L1301 34L1301 52L1301 68L1301 72L1301 75ZM1436 67L1431 71L1428 70L1423 70L1404 70L1385 70L1379 70L1375 71L1375 62L1379 62L1385 62L1404 62L1424 62L1417 48L1407 34L1389 17L1366 4L1372 -2L1393 11L1411 27L1426 12L1439 -3L1446 3L1433 18L1417 33L1426 48L1434 62L1435 65L1436 67ZM1476 9L1476 3L1475 -3L1485 -3L1484 3L1484 9L1484 42L1504 35L1523 26L1527 34L1506 43L1484 51L1484 67L1484 72L1485 77L1475 77L1476 72L1476 67L1476 37L1476 9Z"/>
<path transform="translate(204 184.49) scale(0.0570 -0.0630)" d="M46 16L56 5L64 -4L71 1L63 10L54 20L76 40L90 60L92 62L93 63L87 68L84 68L80 68L48 68L20 68L15 68L10 68L10 60L15 60L20 60L49 60L79 60L67 44L48 25L38 34L29 41L23 36L34 27L46 16ZM95 36L99 28L119 36L137 45L137 8L137 2L136 -3L146 -3L145 2L145 8L145 50L160 61L172 72L166 78L153 66L138 55L119 45L95 36ZM226 78L216 81L215 76L213 73L202 56L182 39L189 34L203 46L214 58L248 58L242 43L232 27L216 13L192 2L199 -4L223 8L239 23L250 40L257 57L258 60L259 62L252 67L250 66L246 66L219 66L221 70L223 73L226 78ZM273 68L273 65L273 61L273 36L273 12L273 5L272 -1L281 -1L281 5L336 5L335 -1L344 -1L344 5L344 11L344 36L344 61L344 65L344 68L339 68L335 68L309 68L282 68L278 68L273 68ZM281 13L281 60L336 60L336 13ZM430 66L424 70L421 70L419 70L394 70L368 70L363 70L358 70L358 62L363 62L368 62L394 62L420 62L415 46L406 29L391 15L368 5L374 -2L397 9L414 25L423 43L429 62L429 64L430 66ZM442 26L446 18L463 25L477 32L477 1L477 -4L477 -8L486 -8L486 -4L486 1L486 37L498 46L508 55L502 61L492 51L478 41L462 33L442 26ZM526 43L526 34L532 34L540 34L568 34L595 34L601 34L606 34L606 43L601 43L595 43L568 43L540 43L532 43L526 43ZM668 72L662 70L667 62L671 54L677 57L672 65L668 72ZM680 77L674 74L679 67L684 59L689 62L684 70L680 77ZM632 8L632 1L632 -4L642 -4L641 2L641 8L641 40L661 33L680 24L684 33L663 42L641 49L641 66L641 71L642 76L632 76L632 71L632 66L632 36L632 8Z"/>
<path transform="translate(204 194.93) scale(0.0600 -0.0630)" d="M46 16L56 5L64 -4L71 1L63 10L54 20L76 40L90 60L92 62L93 63L87 68L84 68L80 68L48 68L20 68L15 68L10 68L10 60L15 60L20 60L49 60L79 60L67 44L48 25L38 34L29 41L23 36L34 27L46 16ZM166 67L161 71L158 70L153 70L134 70L115 70L109 70L105 71L105 62L109 62L115 62L134 62L154 62L147 48L137 34L119 17L96 4L102 -2L123 11L141 27L156 12L169 -3L176 3L163 18L147 33L156 48L164 62L165 65L166 67ZM226 78L216 81L215 77L213 74L202 57L181 39L188 34L203 46L214 60L248 60L243 46L235 32L224 39L214 46L208 40L218 34L229 26L213 12L191 2L198 -4L220 7L236 21L242 16L247 12L253 19L247 23L241 28L251 44L257 59L258 61L259 64L253 68L250 67L246 67L219 67L221 71L223 74L226 78ZM268 43L268 34L274 34L282 34L310 34L337 34L343 34L348 34L348 43L343 43L337 43L310 43L282 43L274 43L268 43ZM447 60L450 65L455 67L460 65L462 60L460 55L455 53L450 55L447 60ZM443 60L446 51L455 48L463 51L467 60L463 69L455 72L446 69L443 60ZM382 26L390 19L392 22L396 26L404 37L413 49L418 52L422 50L431 40L442 29L453 16L464 3L471 10L458 24L446 36L436 47L426 57L417 62L409 56L399 44L389 33L386 29L382 26ZM473 43L473 34L479 34L487 34L515 34L542 34L548 34L553 34L553 43L548 43L542 43L514 43L487 43L479 43L473 43ZM621 75L615 72L620 65L624 56L630 59L625 67L621 75ZM634 79L628 77L633 70L638 62L643 64L639 72L634 79ZM578 76L573 69L585 62L595 55L600 62L589 69L578 76ZM563 5L568 -4L584 1L601 9L623 25L639 45L634 53L619 33L596 16L580 9L563 5ZM563 54L558 47L570 40L580 33L585 40L574 47L563 54ZM743 81L738 79L742 72L746 65L751 68L747 75L743 81ZM754 85L749 83L753 76L757 69L762 72L759 78L754 85ZM677 26L679 17L682 18L688 19L714 23L718 3L719 -1L720 -6L729 -5L728 0L726 4L722 25L747 28L752 29L756 30L754 38L751 37L746 36L721 32L717 52L740 56L744 56L747 57L746 65L743 64L738 64L729 62L715 60L713 70L713 74L712 77L704 76L704 73L705 69L708 58L694 56L686 55L681 55L677 54L679 46L683 47L687 47L709 51L713 31L697 28L686 27L681 26L677 26ZM840 48L836 51L834 50L832 50L818 47L797 43L794 55L793 58L792 61L784 59L785 56L786 53L790 42L777 39L773 39L769 38L771 31L791 35L801 -2L802 -5L803 -9L811 -7L810 -3L809 0L805 14L799 36L829 42L822 32L812 22L819 18L831 32L840 48ZM863 74L863 66L867 66L872 66L892 66L911 66L916 66L920 66L920 74L916 74L911 74L892 74L872 74L867 74L863 74ZM928 48L922 52L920 51L917 51L890 51L864 51L859 51L854 52L854 43L859 43L864 43L891 43L917 43L913 32L905 21L890 10L870 3L876 -4L895 3L912 17L921 30L926 45L927 47L928 48ZM1004 76L994 76L995 72L995 67L995 59L995 51L993 30L986 16L976 8L962 3L969 -4L981 1L993 10L1001 25L1003 51L1003 59L1003 67L1003 72L1004 76ZM957 75L948 75L948 71L948 68L948 52L948 35L948 30L948 27L957 27L957 30L957 34L957 52L957 68L957 72L957 75ZM1022 43L1022 34L1028 34L1036 34L1064 34L1091 34L1097 34L1102 34L1102 43L1097 43L1091 43L1064 43L1036 43L1028 43L1022 43Z"/>
<path transform="translate(204 205.37) scale(0.0630 -0.0630)" d="M8 15L8 6L12 6L17 6L84 6L88 6L92 6L92 15L89 14L84 14L71 14L74 38L78 61L78 63L78 64L72 68L69 67L66 67L46 67L29 67L24 67L19 67L19 58L24 59L29 59L47 59L68 59L66 38L62 14L17 14L12 14L8 15ZM96 43L96 34L102 34L110 34L138 34L165 34L171 34L176 34L176 43L171 43L165 43L138 43L110 43L102 43L96 43ZM252 76L247 75L250 68L253 61L258 62L255 70L252 76ZM262 79L257 78L260 71L263 64L268 66L265 73L262 79ZM177 56L177 47L181 48L187 48L198 48L198 32L197 26L197 22L206 22L206 26L206 32L206 48L234 48L234 44L227 14L207 0L214 -6L236 13L242 44L242 48L253 48L259 48L262 47L262 56L259 55L253 55L242 55L242 68L242 73L243 76L234 76L234 73L234 68L234 55L206 55L206 68L206 73L206 75L197 75L198 72L198 68L198 55L187 55L181 56L177 56ZM268 43L268 34L274 34L282 34L310 34L337 34L343 34L348 34L348 43L343 43L337 43L310 43L282 43L274 43L268 43ZM359 84L359 -8L366 -8L366 84ZM351 65L350 51L347 39L353 37L355 50L357 64ZM367 67L370 60L372 53L378 55L375 62L372 69ZM389 21L425 21L425 13L389 13ZM389 27L389 34L425 34L425 27ZM403 84L403 76L377 76L377 70L403 70L403 64L380 64L380 58L403 58L403 52L374 52L374 46L440 46L440 52L410 52L410 58L434 58L434 64L410 64L410 70L437 70L437 76L410 76L410 84ZM382 40L382 -8L389 -8L389 8L425 8L425 0L424 -1L423 -1L419 -1L412 -1L413 -4L414 -8L423 -7L428 -6L431 -4L432 0L432 40ZM489 39L490 39L495 24L503 11L496 3L489 -3ZM482 79L482 -8L489 -8L489 -3L491 -6L494 -8L501 -2L507 5L514 -2L522 -8L524 -5L527 -2L519 4L511 11L519 27L523 44L519 46L517 45L489 45L489 73L514 73L514 60L514 59L512 59L507 59L499 59L500 55L501 52L511 52L517 53L520 56L521 60L521 79ZM496 39L515 39L512 28L507 17L501 28L496 39ZM441 50L444 43L445 36L436 36L436 30L453 30L453 19L437 19L437 13L453 13L453 -8L460 -8L460 13L476 13L476 19L460 19L460 30L477 30L477 36L468 36L470 43L473 50L468 51L479 51L479 57L460 57L460 67L475 67L475 74L460 74L460 84L453 84L453 74L438 74L438 67L453 67L453 57L434 57L434 51L446 51ZM466 51L464 44L462 38L466 36L448 36L452 38L450 44L447 51ZM594 76L584 76L585 72L585 67L585 59L585 51L583 30L576 16L566 8L552 3L559 -4L571 1L583 10L591 25L593 51L593 59L593 67L593 72L594 76ZM547 75L538 75L538 71L538 68L538 52L538 35L538 30L538 27L547 27L547 30L547 34L547 52L547 68L547 72L547 75ZM682 67L677 71L674 70L669 70L650 70L631 70L625 70L621 71L621 62L625 62L631 62L650 62L670 62L663 48L653 34L635 17L612 4L618 -2L639 11L657 27L672 12L685 -3L692 3L679 18L663 33L672 48L680 62L681 65L682 67ZM722 9L722 3L721 -3L731 -3L730 3L730 9L730 42L750 35L769 26L773 34L752 43L730 51L730 67L730 72L731 77L721 77L722 72L722 67L722 37L722 9Z"/>
<path transform="translate(204 215.81) scale(0.0571 -0.0630)" d="M78 76L68 76L69 72L69 67L69 59L69 51L67 30L60 16L50 8L36 3L43 -4L55 1L67 10L75 25L77 51L77 59L77 67L77 72L78 76ZM31 75L22 75L22 71L22 68L22 52L22 35L22 30L22 27L31 27L31 30L31 34L31 52L31 68L31 72L31 75ZM166 67L161 71L158 70L153 70L134 70L115 70L109 70L105 71L105 62L109 62L115 62L134 62L154 62L147 48L137 34L119 17L96 4L102 -2L123 11L141 27L156 12L169 -3L176 3L163 18L147 33L156 48L164 62L165 65L166 67ZM206 9L206 3L205 -3L215 -3L214 3L214 9L214 42L234 35L253 26L257 34L236 43L214 51L214 67L214 72L215 77L205 77L206 72L206 67L206 37L206 9ZM312 74L312 66L317 66L322 66L342 66L362 66L367 66L371 66L371 74L367 74L362 73L342 73L322 73L317 74L312 74ZM300 49L300 41L305 41L309 41L339 41L338 28L333 16L325 7L314 1L322 -5L334 3L342 14L346 26L348 41L375 41L379 41L382 41L382 49L378 48L375 48L342 48L309 48L305 49L300 49ZM400 73L394 67L407 57L419 46L425 53L413 63L400 73ZM391 6L396 -2L419 5L436 14L456 30L469 49L464 58L451 38L431 21L414 12L391 6ZM544 72L545 77L550 78L555 77L557 72L555 67L550 65L545 67L544 72ZM539 72L539 70L539 69L536 68L512 68L486 68L481 69L476 69L476 60L480 60L486 61L512 61L537 61L533 44L524 28L509 14L485 4L492 -4L515 8L531 23L541 42L546 60L546 61L548 61L550 61L558 64L561 72L558 80L550 83L542 80L539 72ZM571 3L577 -2L579 -1L581 0L615 15L640 36L635 43L610 21L580 9L580 35L580 65L581 70L581 74L571 74L572 70L572 65L572 35L572 8L572 6L571 3ZM645 43L645 34L651 34L659 34L687 34L714 34L720 34L725 34L725 43L720 43L714 43L686 43L659 43L651 43L645 43ZM755 9L755 3L754 -3L764 -3L763 3L763 9L763 42L783 35L802 26L806 34L785 43L763 51L763 67L763 72L764 77L754 77L755 72L755 67L755 37L755 9ZM915 81L910 79L914 72L918 65L923 68L919 75L915 81ZM926 85L921 83L925 76L929 69L934 72L931 78L926 85ZM849 26L851 17L854 18L860 19L886 23L890 3L891 -1L892 -6L901 -5L900 0L898 4L894 25L919 28L924 29L928 30L926 38L923 37L918 36L893 32L889 52L912 56L916 56L919 57L918 65L915 64L910 64L901 62L887 60L885 70L885 74L884 77L876 76L876 73L877 69L880 58L866 56L858 55L853 55L849 54L851 46L855 47L859 47L881 51L885 31L869 28L858 27L853 26L849 26ZM1012 48L1008 51L1006 50L1004 50L990 47L969 43L966 55L965 58L964 61L956 59L957 56L958 53L962 42L949 39L945 39L941 38L943 31L963 35L973 -2L974 -5L975 -9L983 -7L982 -3L981 0L977 14L971 36L1001 42L994 32L984 22L991 18L1003 32L1012 48ZM1035 74L1035 66L1039 66L1044 66L1064 66L1083 66L1088 66L1092 66L1092 74L1088 74L1083 74L1064 74L1044 74L1039 74L1035 74ZM1100 48L1094 52L1092 51L1089 51L1062 51L1036 51L1031 51L1026 52L1026 43L1031 43L1036 43L1063 43L1089 43L1085 32L1077 21L1062 10L1042 3L1048 -4L1067 3L1084 17L1093 30L1098 45L1099 47L1100 48ZM1176 76L1166 76L1167 72L1167 67L1167 59L1167 51L1165 30L1158 16L1148 8L1134 3L1141 -4L1153 1L1165 10L1173 25L1175 51L1175 59L1175 67L1175 72L1176 76ZM1129 75L1120 75L1120 71L1120 68L1120 52L1120 35L1120 30L1120 27L1129 27L1129 30L1129 34L1129 52L1129 68L1129 72L1129 75ZM1194 43L1194 34L1200 34L1208 34L1236 34L1263 34L1269 34L1274 34L1274 43L1269 43L1263 43L1236 43L1208 43L1200 43L1194 43Z"/>
<path transform="translate(204 226.25) scale(0.0537 -0.0630)" d="M78 76L68 76L69 72L69 67L69 59L69 51L67 30L60 16L50 8L36 3L43 -4L55 1L67 10L75 25L77 51L77 59L77 67L77 72L78 76ZM31 75L22 75L22 71L22 68L22 52L22 35L22 30L22 27L31 27L31 30L31 34L31 52L31 68L31 72L31 75ZM166 67L161 71L158 70L153 70L134 70L115 70L109 70L105 71L105 62L109 62L115 62L134 62L154 62L147 48L137 34L119 17L96 4L102 -2L123 11L141 27L156 12L169 -3L176 3L163 18L147 33L156 48L164 62L165 65L166 67ZM206 9L206 3L205 -3L215 -3L214 3L214 9L214 42L234 35L253 26L257 34L236 43L214 51L214 67L214 72L215 77L205 77L206 72L206 67L206 37L206 9ZM286 -1L302 8L309 37L302 65L286 75L269 65L263 37L269 8L286 -1ZM286 6L276 13L272 37L276 60L286 67L296 60L300 37L296 13L286 6ZM322 0L362 0L362 8L348 8L348 73L341 73L334 70L326 68L326 62L339 62L339 8L322 8Z"/>
<path transform="translate(204 236.69) scale(0.0597 -0.0630)" d="M23 44L23 -8L30 -8L30 -5L77 -5L77 -8L84 -8L84 17L30 17L30 24L78 24L78 44ZM77 1L30 1L30 11L77 11ZM58 84L54 77L49 71L49 76L22 76L24 79L25 83L18 84L12 73L4 64L7 62L10 60L14 64L19 70L23 70L26 65L28 60L34 62L33 66L30 70L48 70L45 67L42 65L46 62L46 56L8 56L8 37L15 37L15 50L85 50L85 37L93 37L93 56L53 56L53 64L52 64L55 67L58 70L66 70L70 65L72 60L79 62L77 66L74 70L96 70L96 76L62 76L63 79L65 83ZM30 38L70 38L70 29L30 29ZM134 54L149 54L149 41L134 41ZM155 54L171 54L171 41L155 41ZM134 73L149 73L149 60L134 60ZM155 73L171 73L171 60L155 60ZM118 2L118 -5L183 -5L183 2L156 2L156 16L179 16L179 23L156 23L156 35L178 35L178 79L127 79L127 35L148 35L148 23L126 23L126 16L148 16L148 2ZM90 10L91 2L106 7L122 13L121 20L110 16L110 41L120 41L120 48L110 48L110 70L122 70L122 77L91 77L91 70L103 70L103 48L92 48L92 41L103 41L103 14L96 12L90 10ZM187 68L187 65L187 61L187 36L187 12L187 5L186 -1L195 -1L195 5L250 5L249 -1L258 -1L258 5L258 11L258 36L258 61L258 65L258 68L253 68L249 68L223 68L196 68L192 68L187 68ZM195 13L195 60L250 60L250 13ZM334 80L329 78L334 71L337 64L343 66L339 73L334 80ZM346 84L340 82L345 75L348 68L354 70L350 77L346 84ZM308 75L298 78L297 74L295 70L284 54L264 36L271 31L285 43L296 56L330 56L324 40L314 25L297 10L274 0L281 -7L305 5L321 20L332 38L339 55L340 58L341 60L334 64L332 63L328 63L301 63L303 67L305 71L308 75ZM400 74L400 66L404 66L409 66L429 66L448 66L453 66L458 66L458 74L453 74L448 74L429 74L409 74L404 74L400 74ZM465 48L459 52L457 51L454 51L427 51L401 51L396 51L391 52L391 43L396 43L401 43L428 43L454 43L450 32L442 21L427 10L407 3L413 -4L432 3L449 17L458 30L464 45L464 47L465 48ZM472 36L476 28L496 36L514 45L514 8L514 2L513 -3L523 -3L522 2L522 8L522 50L537 61L549 72L543 78L530 66L515 55L496 45L472 36ZM637 86L632 83L636 77L640 70L646 72L642 79L637 86ZM634 65L629 68L632 70L629 77L625 83L619 81L623 75L626 69L624 69L622 68L598 68L572 68L567 69L562 69L562 60L566 60L572 61L598 61L623 61L619 44L610 28L595 14L571 4L578 -4L601 8L617 23L627 42L632 60L633 63L634 65ZM658 74L658 66L662 66L667 66L687 66L706 66L711 66L716 66L716 74L711 74L706 74L687 74L667 74L662 74L658 74ZM723 48L717 52L715 51L712 51L685 51L659 51L654 51L649 52L649 43L654 43L659 43L686 43L712 43L708 32L700 21L685 10L665 3L671 -4L690 3L707 17L716 30L722 45L722 47L723 48ZM799 76L789 76L790 72L790 67L790 59L790 51L788 30L781 16L771 8L758 3L764 -4L776 1L788 10L796 25L798 51L798 59L798 67L798 72L799 76ZM752 75L743 75L743 71L744 68L744 52L744 35L743 30L743 27L752 27L752 30L752 34L752 52L752 68L752 72L752 75Z"/>
<path transform="translate(204 247.13) scale(0.0619 -0.0630)" d="M59 15L74 3L86 -8L94 -3L80 8L65 19ZM33 19L21 7L6 -3L9 -5L12 -8L27 3L41 16ZM9 63L9 56L28 56L28 32L5 32L5 24L96 24L96 32L72 32L72 56L92 56L92 63L72 63L72 83L64 83L64 63L36 63L36 83L28 83L28 63ZM36 32L36 56L64 56L64 32ZM125 84L123 78L121 71L92 71L92 64L118 64L106 45L90 30L93 28L95 25L104 32L112 41L112 -8L119 -8L119 12L161 12L161 2L160 0L159 -1L153 -1L144 0L145 -4L146 -8L157 -8L164 -7L167 -4L168 1L168 52L120 52L123 58L126 64L180 64L180 71L129 71L131 77L133 82ZM119 29L161 29L161 18L119 18ZM119 35L119 46L161 46L161 35ZM250 76L240 76L241 72L241 67L241 59L241 51L239 30L232 16L222 8L208 3L215 -4L227 1L239 10L247 25L249 51L249 59L249 67L249 72L250 76ZM203 75L194 75L194 71L194 68L194 52L194 35L194 30L194 27L203 27L203 30L203 34L203 52L203 68L203 72L203 75ZM281 73L275 67L288 57L300 46L306 53L294 63L281 73ZM272 6L277 -2L300 5L317 14L337 30L350 49L346 58L332 38L312 21L295 12L272 6ZM398 78L388 81L387 76L385 73L374 56L354 39L361 34L375 46L386 58L420 58L414 43L404 27L388 13L364 2L371 -4L395 8L411 23L422 40L429 57L430 60L431 62L424 67L422 66L418 66L391 66L393 70L395 73L398 78Z"/>
<path transform="translate(204 257.57) scale(0.0698 -0.0630)" d="M42 40L42 14L36 14L36 8L42 8L42 -8L49 -8L49 8L84 8L84 0L83 -1L82 -2L78 -2L71 -2L73 -5L74 -8L82 -8L87 -7L90 -4L91 0L91 8L97 8L97 14L91 14L91 40L70 40L70 46L96 46L96 51L81 51L81 58L92 58L92 64L81 64L81 70L94 70L94 76L81 76L81 84L74 84L74 76L58 76L58 84L51 84L51 76L40 76L40 70L51 70L51 64L42 64L42 58L51 58L51 51L37 51L37 46L63 46L63 40ZM58 58L74 58L74 51L58 51ZM58 64L58 70L74 70L74 64ZM63 14L49 14L49 22L63 22ZM70 14L70 22L84 22L84 14ZM63 27L49 27L49 34L63 34ZM70 27L70 34L84 34L84 27ZM19 84L19 62L5 62L5 55L18 55L12 34L3 18L5 14L7 11L14 23L19 39L19 -8L26 -8L26 40L31 32L34 25L38 31L32 39L26 48L26 55L38 55L38 62L26 62L26 84ZM140 84L141 75L141 67L99 67L99 39L97 17L90 -4L93 -6L96 -9L105 15L107 39L107 40L125 40L124 21L123 14L121 14L120 13L115 13L109 14L110 10L111 7L118 7L123 7L127 8L129 10L131 19L132 43L132 45L132 46L107 46L107 60L141 60L144 37L149 17L138 7L126 -1L128 -4L131 -8L142 0L152 9L160 -3L170 -7L178 -3L182 15L179 16L175 19L174 5L171 0L164 4L157 16L167 32L175 50L168 52L162 38L155 25L151 41L149 60L181 60L181 67L149 67L148 75L148 84ZM153 79L163 73L171 67L176 72L168 78L158 84ZM181 78L191 72L199 66L203 72L195 78L185 83ZM176 51L186 45L194 40L198 46L190 52L180 56ZM179 -2L185 -7L194 9L202 26L197 31L188 13L179 -2ZM232 84L232 74L204 74L204 67L214 67L221 59L229 52L216 48L201 44L203 41L205 38L221 42L236 48L249 43L265 39L267 42L269 45L255 49L243 53L250 59L256 67L267 67L267 74L239 74L239 84ZM247 67L242 61L236 56L229 61L223 67ZM251 27L251 18L219 18L220 22L220 26L220 27ZM213 39L213 26L211 11L200 -5L203 -7L206 -9L214 0L218 11L251 11L251 -8L259 -8L259 39L251 39L251 34L220 34L220 39ZM343 51L335 52L335 48L335 43L334 39L334 36L321 41L306 44L313 58L318 68L319 69L320 71L315 75L313 74L310 74L300 73L288 73L284 73L280 73L281 65L284 66L288 66L299 66L309 67L304 56L298 44L274 36L265 18L269 8L278 4L285 5L291 11L297 23L303 37L318 34L332 28L324 12L306 0L312 -6L329 7L339 24L344 20L349 16L353 24L347 28L341 32L342 41L343 51ZM295 37L290 25L284 15L282 12L278 12L274 13L272 18L278 31L295 37ZM392 64L389 50L386 37L378 19L371 14L364 18L361 32L369 52L392 64ZM400 64L420 55L427 35L419 15L401 6L397 5L393 4L397 -3L425 9L435 35L424 61L396 72L366 60L353 31L358 12L371 4L383 12L394 36L397 50L400 64ZM457 62L476 62L473 47L468 34L459 41L449 48L453 54L457 62ZM487 60L483 59L484 63L485 67L480 69L479 69L460 69L462 75L464 82L457 84L447 59L433 39L436 37L439 34L442 38L446 42L456 35L465 28L451 10L435 -2L438 -4L441 -8L466 16L482 55L489 45L498 35L498 -8L505 -8L505 28L514 21L523 15L526 19L528 22L517 29L505 38L505 84L498 84L498 46L492 53L487 60ZM576 57L600 57L600 46L576 46ZM576 40L600 40L600 30L576 30ZM576 73L600 73L600 63L576 63ZM545 25L545 18L535 18L535 25ZM569 80L569 23L576 23L573 11L566 1L566 5L552 5L552 13L564 13L564 18L552 18L552 25L563 25L563 31L552 31L552 38L565 38L565 43L552 43L556 50L549 51L547 47L546 43L535 43L538 48L541 53L566 53L566 59L543 59L545 64L547 69L564 69L564 75L536 75L537 79L538 82L532 84L527 73L520 64L524 62L526 60L529 64L532 69L540 69L538 64L536 59L521 59L521 53L533 53L527 43L519 34L521 31L524 28L526 31L528 33L528 -6L535 -6L535 -1L562 -1L560 -2L558 -3L560 -5L562 -8L577 4L583 23L590 23L590 2L592 -5L598 -7L601 -7L605 -7L611 -3L613 10L610 11L607 13L606 2L604 0L602 0L599 0L597 0L597 2L597 23L608 23L608 80ZM545 31L535 31L535 38L545 38ZM545 13L545 5L535 5L535 13Z"/>
<path transform="translate(204 268.01) scale(0.0642 -0.0630)" d="M72 59L82 49L90 39L96 43L88 52L78 62ZM21 62L14 52L4 44L7 42L10 40L20 49L29 60ZM46 84L46 74L6 74L6 67L39 67L36 52L23 38L26 36L28 33L43 50L46 66L46 67L60 67L60 45L59 44L58 44L54 44L47 44L49 40L49 37L58 37L63 38L66 41L67 45L67 67L94 67L94 74L54 74L54 84ZM39 39L27 27L7 16L10 14L12 11L21 15L29 20L36 13L43 8L25 2L5 -2L7 -5L8 -8L30 -4L50 3L69 -4L92 -8L94 -5L96 -1L76 2L58 7L70 16L80 28L75 32L73 31L42 31L45 34L47 37ZM35 24L35 25L68 25L60 17L51 11L42 17L35 24ZM132 60L131 60L135 65L138 70L155 70L153 65L150 60ZM103 84L103 64L90 64L90 57L103 57L103 36L89 32L91 25L103 29L103 1L102 -1L101 -1L97 -1L92 -1L93 -5L94 -8L102 -8L106 -7L109 -4L110 1L110 31L121 35L120 42L110 38L110 57L120 57L122 55L123 54L125 55L125 27L132 27L132 39L133 37L135 35L144 42L147 54L154 54L154 45L155 39L161 38L165 38L170 38L171 38L171 28L177 28L177 60L157 60L161 67L164 74L160 77L159 76L142 76L143 80L145 83L138 84L131 72L120 60L120 64L110 64L110 84ZM132 39L132 54L141 54L139 45L132 39ZM160 54L171 54L171 44L170 43L169 43L165 43L162 43L160 43L160 45ZM147 33L147 28L146 24L119 24L119 17L144 17L135 5L116 -2L118 -5L120 -8L140 0L150 14L161 0L178 -8L180 -4L182 -2L166 5L156 17L181 17L181 24L153 24L154 28L154 33ZM203 31L195 33L192 25L191 16L199 1L222 -4L236 -4L247 -2L248 6L236 4L222 4L205 7L198 17L200 24L203 31ZM188 63L188 55L210 54L230 55L236 43L242 32L235 33L226 34L225 27L238 26L249 24L253 30L251 32L249 35L243 44L238 56L248 57L258 60L257 68L246 65L235 63L232 72L230 80L222 79L223 75L224 71L227 62L209 62L188 63ZM287 72L287 62L279 61L272 61L269 61L266 61L267 52L286 55L286 45L275 30L263 15L268 8L277 20L285 32L285 28L285 14L284 2L284 -1L284 -4L293 -4L293 -1L292 2L292 14L292 26L292 32L292 38L307 51L322 57L328 55L330 49L328 31L326 12L329 2L337 -1L347 1L355 8L354 16L346 10L339 8L335 10L334 14L336 33L338 51L334 61L324 65L307 59L293 48L293 54L296 57L298 61L295 64L294 64L295 73L296 79L287 79L287 76L287 72ZM398 48L398 41L407 42L416 42L425 41L433 41L433 48L425 49L416 49L406 49L398 48ZM400 24L392 25L391 19L391 13L397 2L415 -2L426 -2L434 0L435 8L425 6L415 6L401 8L398 15L399 19L400 24ZM366 62L361 62L354 63L354 55L360 55L366 54L370 55L375 55L374 49L373 44L365 20L356 -1L365 -4L373 18L380 42L382 49L383 56L394 57L404 59L404 67L395 65L385 63L386 71L387 75L388 79L379 80L379 76L378 71L378 67L377 62L371 62L366 62ZM516 66L510 70L507 70L505 70L480 70L454 70L449 70L444 70L444 62L449 62L454 62L480 62L506 62L501 46L492 29L477 15L454 5L460 -2L483 9L500 25L509 43L515 62L515 64L516 66ZM533 8L539 2L559 16L574 32L574 4L573 2L571 1L566 1L559 2L560 -6L567 -6L574 -6L580 -4L582 1L581 39L596 39L599 39L602 39L602 47L599 46L595 46L581 46L581 54L581 58L581 61L573 61L573 58L573 54L574 46L544 46L540 46L536 47L536 39L540 39L544 39L570 39L555 23L533 8ZM612 43L612 34L618 34L626 34L654 34L681 34L687 34L692 34L692 43L687 43L681 43L654 43L626 43L618 43L612 43ZM705 11L700 11L695 11L697 2L701 2L705 3L736 6L768 10L771 3L773 -3L781 0L771 21L759 41L752 38L758 29L764 17L743 15L719 12L729 40L737 65L739 71L740 75L730 77L730 73L728 67L720 41L710 11Z"/>
</g></svg>
<div class="a" style="left:706.1px;top:105px;width:8.7px;height:167.5px;background:#f0f0f0"></div>
<!--/CENTER-->
<!--LOWER-->
<div class="a" style="left:80.8px;top:276.1px;width:634.0px;height:11.3px;background:#f0f0f0"></div>
<div class="a" style="left:80.8px;top:276.1px;width:625.3px;height:180.9px;overflow:hidden">
<div class="a hl" style="left:0;top:21.45px;width:625.3px"></div>
<div class="a hl" style="left:0;top:31.95px;width:625.3px"></div>
<div class="a hl" style="left:0;top:42.45px;width:625.3px"></div>
<div class="a hl" style="left:0;top:52.95px;width:625.3px"></div>
<div class="a hl" style="left:0;top:63.45px;width:625.3px"></div>
<div class="a hl" style="left:0;top:73.95px;width:625.3px"></div>
<div class="a hl" style="left:0;top:84.45px;width:625.3px"></div>
<div class="a hl" style="left:0;top:94.95px;width:625.3px"></div>
<div class="a hl" style="left:0;top:105.45px;width:625.3px"></div>
<div class="a hl" style="left:0;top:115.95px;width:625.3px"></div>
<div class="a hl" style="left:0;top:126.45px;width:625.3px"></div>
<div class="a hl" style="left:0;top:136.95px;width:625.3px"></div>
<div class="a hl" style="left:0;top:147.45px;width:625.3px"></div>
<div class="a hl" style="left:0;top:157.95px;width:625.3px"></div>
<div class="a hl" style="left:0;top:168.45px;width:625.3px"></div>
<div class="a hl" style="left:0;top:178.95px;width:625.3px"></div>
<div class="a hl" style="left:0;top:189.45px;width:625.3px"></div>
<div class="a hl" style="left:0;top:10.95px;width:625.3px"></div>
<div class="a vl" style="left:47.35px;top:0;height:180.9px"></div>
<div class="a vl" style="left:97.25px;top:0;height:180.9px"></div>
<div class="a vl" style="left:206.65px;top:0;height:180.9px"></div>
<div class="a vl" style="left:299.45px;top:0;height:180.9px"></div>
<div class="a vl" style="left:356.45px;top:0;height:180.9px"></div>
<div class="a vl" style="left:411.15px;top:0;height:180.9px"></div>
<div class="a vl" style="left:461.65px;top:0;height:180.9px"></div>
<div class="a vl" style="left:508.65px;top:0;height:180.9px"></div>
<div class="a vl" style="left:551.15px;top:0;height:180.9px"></div>
<div class="a vl" style="left:618.35px;top:0;height:180.9px"></div>
<div class="t r it fa" style="left:0.0px;width:46.1px;top:13.70px">FALSE</div>
<div class="t r it fa" style="left:47.7px;width:48.3px;top:13.70px">FALSE</div>
<div class="t ct" style="left:99.2px;top:13.70px">00000000-0000-0000-0000-000000000000</div>
<div class="t r it" style="left:207.0px;width:91.2px;top:13.70px">null</div>
<div class="t r it" style="left:299.8px;width:55.4px;top:13.70px">null</div>
<div class="t r it" style="left:356.8px;width:53.1px;top:13.70px">null</div>
<div class="t r it" style="left:411.5px;width:48.9px;top:13.70px">null</div>
<div class="t ct" style="left:510.6px;top:13.70px">none</div>
<div class="t r it fa" style="left:551.5px;width:65.6px;top:13.70px">FALSE</div>
<div class="t ct" style="left:620.3px;top:13.70px">ID</div>
<div class="t r it fa" style="left:0.0px;width:46.1px;top:24.20px">FALSE</div>
<div class="t r it fa" style="left:47.7px;width:48.3px;top:24.20px">FALSE</div>
<div class="t ct" style="left:99.2px;top:24.20px">00000000-0000-0000-0000-000000000000</div>
<div class="t r it" style="left:207.0px;width:91.2px;top:24.20px">null</div>
<div class="t r it" style="left:299.8px;width:55.4px;top:24.20px">null</div>
<div class="t r it" style="left:356.8px;width:53.1px;top:24.20px">null</div>
<div class="t r it" style="left:411.5px;width:48.9px;top:24.20px">null</div>
<div class="t ct" style="left:510.6px;top:24.20px">none</div>
<div class="t r it fa" style="left:551.5px;width:65.6px;top:24.20px">FALSE</div>
<div class="t ct" style="left:620.3px;top:24.20px">Cc</div>
<div class="t r it fa" style="left:0.0px;width:46.1px;top:34.70px">FALSE</div>
<div class="t r it fa" style="left:47.7px;width:48.3px;top:34.70px">FALSE</div>
<div class="t ct" style="left:99.2px;top:34.70px">00000000-0000-0000-0000-000000000000</div>
<div class="t r it" style="left:207.0px;width:91.2px;top:34.70px">null</div>
<div class="t r it" style="left:299.8px;width:55.4px;top:34.70px">null</div>
<div class="t r it" style="left:356.8px;width:53.1px;top:34.70px">null</div>
<div class="t r it" style="left:411.5px;width:48.9px;top:34.70px">null</div>
<div class="t ct" style="left:510.6px;top:34.70px">none</div>
<div class="t r it fa" style="left:551.5px;width:65.6px;top:34.70px">FALSE</div>
<div class="t ct" style="left:620.3px;top:34.70px">Cc</div>
<div class="t r it fa" style="left:0.0px;width:46.1px;top:45.20px">FALSE</div>
<div class="t r it fa" style="left:47.7px;width:48.3px;top:45.20px">FALSE</div>
<div class="t ct" style="left:99.2px;top:45.20px">00000000-0000-0000-0000-000000000000</div>
<div class="t r it" style="left:207.0px;width:91.2px;top:45.20px">null</div>
<div class="t r it" style="left:299.8px;width:55.4px;top:45.20px">null</div>
<div class="t r it" style="left:356.8px;width:53.1px;top:45.20px">null</div>
<div class="t r it" style="left:411.5px;width:48.9px;top:45.20px">null</div>
<div class="t ct" style="left:510.6px;top:45.20px">none</div>
<div class="t r it fa" style="left:551.5px;width:65.6px;top:45.20px">FALSE</div>
<div class="t ct" style="left:620.3px;top:45.20px">Th</div>
<div class="t r it fa" style="left:0.0px;width:46.1px;top:55.70px">FALSE</div>
<div class="t r it fa" style="left:47.7px;width:48.3px;top:55.70px">FALSE</div>
<div class="t ct" style="left:99.2px;top:55.70px">00000000-0000-0000-0000-000000000000</div>
<div class="t r it" style="left:207.0px;width:91.2px;top:55.70px">null</div>
<div class="t r it" style="left:299.8px;width:55.4px;top:55.70px">null</div>
<div class="t r it" style="left:356.8px;width:53.1px;top:55.70px">null</div>
<div class="t r it" style="left:411.5px;width:48.9px;top:55.70px">null</div>
<div class="t ct" style="left:510.6px;top:55.70px">none</div>
<div class="t r it fa" style="left:551.5px;width:65.6px;top:55.70px">FALSE</div>
<div class="t ct" style="left:620.3px;top:55.70px">M</div>
<div class="t r it fa" style="left:0.0px;width:46.1px;top:66.20px">FALSE</div>
<div class="t r it fa" style="left:47.7px;width:48.3px;top:66.20px">FALSE</div>
<div class="t ct" style="left:99.2px;top:66.20px">00000000-0000-0000-0000-000000000000</div>
<div class="t r it" style="left:207.0px;width:91.2px;top:66.20px">null</div>
<div class="t r it" style="left:299.8px;width:55.4px;top:66.20px">null</div>
<div class="t r it" style="left:356.8px;width:53.1px;top:66.20px">null</div>
<div class="t r it" style="left:411.5px;width:48.9px;top:66.20px">null</div>
<div class="t ct" style="left:510.6px;top:66.20px">none</div>
<div class="t r it fa" style="left:551.5px;width:65.6px;top:66.20px">FALSE</div>
<div class="t ct" style="left:620.3px;top:66.20px">Cr</div>
<div class="t r it fa" style="left:0.0px;width:46.1px;top:76.70px">FALSE</div>
<div class="t r it fa" style="left:47.7px;width:48.3px;top:76.70px">FALSE</div>
<div class="t ct" style="left:99.2px;top:76.70px">00000000-0000-0000-0000-000000000000</div>
<div class="t r it" style="left:207.0px;width:91.2px;top:76.70px">null</div>
<div class="t r it" style="left:299.8px;width:55.4px;top:76.70px">null</div>
<div class="t r it" style="left:356.8px;width:53.1px;top:76.70px">null</div>
<div class="t r it" style="left:411.5px;width:48.9px;top:76.70px">null</div>
<div class="t ct" style="left:510.6px;top:76.70px">none</div>
<div class="t r it fa" style="left:551.5px;width:65.6px;top:76.70px">FALSE</div>
<div class="t ct" style="left:620.3px;top:76.70px">Au</div>
<div class="t r it fa" style="left:0.0px;width:46.1px;top:87.20px">FALSE</div>
<div class="t r it fa" style="left:47.7px;width:48.3px;top:87.20px">FALSE</div>
<div class="t ct" style="left:99.2px;top:87.20px">00000000-0000-0000-0000-000000000000</div>
<div class="t r it" style="left:207.0px;width:91.2px;top:87.20px">null</div>
<div class="t r it" style="left:299.8px;width:55.4px;top:87.20px">null</div>
<div class="t r it" style="left:356.8px;width:53.1px;top:87.20px">null</div>
<div class="t r it" style="left:411.5px;width:48.9px;top:87.20px">null</div>
<div class="t ct" style="left:510.6px;top:87.20px">none</div>
<div class="t r it fa" style="left:551.5px;width:65.6px;top:87.20px">FALSE</div>
<div class="t ct" style="left:620.3px;top:87.20px">Ed</div>
<div class="t r it fa" style="left:0.0px;width:46.1px;top:97.70px">FALSE</div>
<div class="t r it fa" style="left:47.7px;width:48.3px;top:97.70px">FALSE</div>
<div class="t ct" style="left:99.2px;top:97.70px">00000000-0000-0000-0000-000000000000</div>
<div class="t r it" style="left:207.0px;width:91.2px;top:97.70px">null</div>
<div class="t r it" style="left:299.8px;width:55.4px;top:97.70px">null</div>
<div class="t r it" style="left:356.8px;width:53.1px;top:97.70px">null</div>
<div class="t r it" style="left:411.5px;width:48.9px;top:97.70px">null</div>
<div class="t ct" style="left:510.6px;top:97.70px">none</div>
<div class="t r it fa" style="left:551.5px;width:65.6px;top:97.70px">FALSE</div>
<div class="t ct" style="left:620.3px;top:97.70px">Ot</div>
<div class="t r it fa" style="left:0.0px;width:46.1px;top:108.20px">FALSE</div>
<div class="t r it fa" style="left:47.7px;width:48.3px;top:108.20px">FALSE</div>
<div class="t ct" style="left:99.2px;top:108.20px">00000000-0000-0000-0000-000000000000</div>
<div class="t r it" style="left:207.0px;width:91.2px;top:108.20px">null</div>
<div class="t r it" style="left:299.8px;width:55.4px;top:108.20px">null</div>
<div class="t r it" style="left:356.8px;width:53.1px;top:108.20px">null</div>
<div class="t r it" style="left:411.5px;width:48.9px;top:108.20px">null</div>
<div class="t ct" style="left:510.6px;top:108.20px">none</div>
<div class="t r it fa" style="left:551.5px;width:65.6px;top:108.20px">FALSE</div>
<div class="t ct" style="left:620.3px;top:108.20px">Ot</div>
<div class="t r it fa" style="left:0.0px;width:46.1px;top:118.70px">FALSE</div>
<div class="t r it fa" style="left:47.7px;width:48.3px;top:118.70px">FALSE</div>
<div class="t ct" style="left:99.2px;top:118.70px">00000000-0000-0000-0000-000000000000</div>
<div class="t r it" style="left:207.0px;width:91.2px;top:118.70px">null</div>
<div class="t r it" style="left:299.8px;width:55.4px;top:118.70px">null</div>
<div class="t r it" style="left:356.8px;width:53.1px;top:118.70px">null</div>
<div class="t r it" style="left:411.5px;width:48.9px;top:118.70px">null</div>
<div class="t ct" style="left:510.6px;top:118.70px">none</div>
<div class="t r it fa" style="left:551.5px;width:65.6px;top:118.70px">FALSE</div>
<div class="t ct" style="left:620.3px;top:118.70px">ov</div>
<div class="t r it fa" style="left:0.0px;width:46.1px;top:129.20px">FALSE</div>
<div class="t r it fa" style="left:47.7px;width:48.3px;top:129.20px">FALSE</div>
<div class="t ct" style="left:99.2px;top:129.20px">00000000-0000-0000-0000-000000000000</div>
<div class="t r it" style="left:207.0px;width:91.2px;top:129.20px">null</div>
<div class="t r it" style="left:299.8px;width:55.4px;top:129.20px">null</div>
<div class="t r it" style="left:356.8px;width:53.1px;top:129.20px">null</div>
<div class="t r it" style="left:411.5px;width:48.9px;top:129.20px">null</div>
<div class="t ct" style="left:510.6px;top:129.20px">none</div>
<div class="t r it fa" style="left:551.5px;width:65.6px;top:129.20px">FALSE</div>
<div class="t ct" style="left:620.3px;top:129.20px">W</div>
<div class="t r it fa" style="left:0.0px;width:46.1px;top:139.70px">FALSE</div>
<div class="t r it fa" style="left:47.7px;width:48.3px;top:139.70px">FALSE</div>
<div class="t ct" style="left:99.2px;top:139.70px">00000000-0000-0000-0000-000000000000</div>
<div class="t r it" style="left:207.0px;width:91.2px;top:139.70px">null</div>
<div class="t r it" style="left:299.8px;width:55.4px;top:139.70px">null</div>
<div class="t r it" style="left:356.8px;width:53.1px;top:139.70px">null</div>
<div class="t r it" style="left:411.5px;width:48.9px;top:139.70px">null</div>
<div class="t ct" style="left:510.6px;top:139.70px">none</div>
<div class="t r it fa" style="left:551.5px;width:65.6px;top:139.70px">FALSE</div>
<div class="t ct" style="left:620.3px;top:139.70px">Ot</div>
<div class="t r it fa" style="left:0.0px;width:46.1px;top:150.20px">FALSE</div>
<div class="t r it fa" style="left:47.7px;width:48.3px;top:150.20px">FALSE</div>
<div class="t ct" style="left:99.2px;top:150.20px">00000000-0000-0000-0000-000000000000</div>
<div class="t r it" style="left:207.0px;width:91.2px;top:150.20px">null</div>
<div class="t r it" style="left:299.8px;width:55.4px;top:150.20px">null</div>
<div class="t r it" style="left:356.8px;width:53.1px;top:150.20px">null</div>
<div class="t r it" style="left:411.5px;width:48.9px;top:150.20px">null</div>
<div class="t ct" style="left:510.6px;top:150.20px">none</div>
<div class="t r it fa" style="left:551.5px;width:65.6px;top:150.20px">FALSE</div>
<div class="t ct" style="left:620.3px;top:150.20px">Ot</div>
<div class="t r it fa" style="left:0.0px;width:46.1px;top:160.70px">FALSE</div>
<div class="t r it fa" style="left:47.7px;width:48.3px;top:160.70px">FALSE</div>
<div class="t ct" style="left:99.2px;top:160.70px">00000000-0000-0000-0000-000000000000</div>
<div class="t r it" style="left:207.0px;width:91.2px;top:160.70px">null</div>
<div class="t r it" style="left:299.8px;width:55.4px;top:160.70px">null</div>
<div class="t r it" style="left:356.8px;width:53.1px;top:160.70px">null</div>
<div class="t r it" style="left:411.5px;width:48.9px;top:160.70px">null</div>
<div class="t ct" style="left:510.6px;top:160.70px">none</div>
<div class="t r it fa" style="left:551.5px;width:65.6px;top:160.70px">FALSE</div>
<div class="t ct" style="left:620.3px;top:160.70px">At</div>
<div class="t r it fa" style="left:0.0px;width:46.1px;top:171.20px">FALSE</div>
<div class="t r it fa" style="left:47.7px;width:48.3px;top:171.20px">FALSE</div>
<div class="t ct" style="left:99.2px;top:171.20px">00000000-0000-0000-0000-000000000000</div>
<div class="t r it" style="left:207.0px;width:91.2px;top:171.20px">null</div>
<div class="t r it" style="left:299.8px;width:55.4px;top:171.20px">null</div>
<div class="t r it" style="left:356.8px;width:53.1px;top:171.20px">null</div>
<div class="t ct" style="left:413.1px;top:171.20px">0</div>
<div class="t ct" style="left:510.6px;top:171.20px">none</div>
<div class="t r it fa" style="left:551.5px;width:65.6px;top:171.20px">FALSE</div>
<div class="t ct" style="left:620.3px;top:171.20px">Ot</div>
<div class="t r it fa" style="left:0.0px;width:46.1px;top:181.70px">FALSE</div>
<div class="t r it fa" style="left:47.7px;width:48.3px;top:181.70px">FALSE</div>
<div class="t ct" style="left:99.2px;top:181.70px">00000000-0000-0000-0000-000000000000</div>
<div class="t r it" style="left:207.0px;width:91.2px;top:181.70px">null</div>
<div class="t r it" style="left:299.8px;width:55.4px;top:181.70px">null</div>
<div class="t r it" style="left:356.8px;width:53.1px;top:181.70px">null</div>
<div class="t r it" style="left:411.5px;width:48.9px;top:181.70px">null</div>
<div class="t ct" style="left:510.6px;top:181.70px">none</div>
<div class="t r it fa" style="left:551.5px;width:65.6px;top:181.70px">FALSE</div>
<div class="t ct" style="left:620.3px;top:181.70px">Ot</div>
</div>
<div class="a" style="left:80.8px;top:276.1px;width:634.0px;height:11.3px;overflow:hidden"><div class="t hb" style="left:1.6px;top:2.8px">AutoIndexed</div><div class="t hb" style="left:49.3px;top:2.8px">CanBeDeleted</div><div class="t hb" style="left:99.2px;top:2.8px">ClientSideComponentId</div><div class="t hb" style="left:208.6px;top:2.8px">ClientSideComponentProperties</div><div class="t hb" style="left:301.4px;top:2.8px">CustomFormatter</div><div class="t hb" style="left:358.4px;top:2.8px">DefaultFormula</div><div class="t hb" style="left:413.1px;top:2.8px">DefaultValue</div><div class="t hb" style="left:463.6px;top:2.8px">Description</div><div class="t hb" style="left:510.6px;top:2.8px">Direction</div><div class="t hb" style="left:553.1px;top:2.8px">EnforceUniqueValues</div><div class="t hb" style="left:620.3px;top:2.8px">Entity</div></div>
<div class="a" style="left:706.1px;top:292.5px;width:8.7px;height:164.5px;background:#f0f0f0"></div>
<div class="a" style="left:706.8px;top:305px;width:7.5px;height:109px;background:#cdcdcd"></div>
<div class="a" style="left:80.8px;top:457px;width:634px;height:9px;background:#f0f0f0"></div>
<div class="a" style="left:97.7px;top:458.3px;width:160px;height:7.4px;background:#cdcdcd"></div>
<div class="a" style="left:706.8px;top:177.4px;width:7.5px;height:77.5px;background:#cdcdcd"></div><div class="a" style="left:80.8px;top:271.5px;width:634px;height:.8px;background:#e0e0e0"></div><div class="a" style="left:80.8px;top:92.1px;width:634px;height:.9px;background:#ececec"></div>
<svg style="left:0;top:0" width="850" height="478" viewBox="0 0 850 478"><g fill="none" stroke="#333" stroke-width="1.200">
<path d="M707.900 117.800l2.600-2.600 2.600 2.600"/>
<path d="M707.900 259.800l2.600 2.600 2.600-2.600"/>
<path d="M707.900 299.400l2.600-2.600 2.600 2.600"/>
<path d="M707.900 445.600l2.600 2.600 2.600-2.600"/>
<path d="M92.600 459.300l-2.300 2.500 2.300 2.500"/>
<path d="M693.600 459.300l2.300 2.500-2.300 2.500"/>
</g></svg>
<!--/LOWER-->


















</div>

<!-- RIGHT PANE -->
<div id="right">
<!--RIGHT-->
<div class="a" style="left:716.1px;top:73px;width:2px;height:393px;background:#f3f3f3"></div>
<div class="t" style="left:724.2px;top:83.2px;font-size:9.25px;letter-spacing:0;line-height:11px;height:11px;color:#5a8f7b;-webkit-text-stroke:0">Query Settings</div>
<div class="t sh" style="left:728.7px;top:103.6px">PROPERTIES</div>
<div class="t" style="left:729px;top:113.9px;color:#444;-webkit-text-stroke:.05px">Name</div>
<div class="a" style="left:728.9px;top:121.8px;width:108.6px;height:10.6px;border:1px solid #cfcfcf;border-bottom-color:#bdbdbd;background:#fff"></div>
<div class="t" style="left:731.3px;top:123.8px;color:#444;-webkit-text-stroke:.05px">Query1</div>
<div class="t" style="left:729px;top:136.8px;color:#3d78c4;-webkit-text-stroke:.05px">All Properties</div>
<div class="t sh" style="left:728.7px;top:154.1px">APPLIED STEPS</div>
<div class="a" style="left:728.9px;top:164.4px;width:108.8px;height:292.3px;border:1px solid #e4e4e4;border-top-color:#cdcdcd;background:#fff"></div>
<div class="a" style="left:729.6px;top:185.1px;width:107.2px;height:10px;background:#d3efe1"></div>
<div class="t st" style="left:739px;top:166.6px">Source</div>
<div class="t st" style="left:739px;top:176.6px">SPLists</div>
<div class="t st" style="left:739px;top:186.6px">AddedPrimaryKey</div>
<svg style="left:0;top:0" width="850" height="478" viewBox="0 0 850 478"><g fill="none">
<path d="M832.300 85.300l5.200 5.200M837.500 85.300l-5.200 5.200" stroke="#666" stroke-width=".7"/>
<path d="M725.200 105.800v2.800h-2.800z" fill="#444"/>
<path d="M725.200 156v2.800h-2.800z" fill="#444"/>
<path d="M731.900 188l3.800 4.400M735.700 188l-3.800 4.400" stroke="#333" stroke-width=".85"/>
<g stroke="#8c8c8c" stroke-width=".65"><circle cx="830.400" cy="169.900" r="1.300"/><path d="M830.400 167.300v5.200M827.800 169.900h5.200M828.500 168l3.800 3.800M832.300 168l-3.800 3.800"/>
<circle cx="830.400" cy="179.900" r="1.300"/><path d="M830.400 177.300v5.200M827.800 179.900h5.200M828.500 178l3.800 3.800M832.300 178l-3.800 3.800"/></g>
</g></svg>
<!--/RIGHT-->
</div>

<!-- STATUS -->
<div id="status" class="a">
<div class="t" style="left:3px">3 COLUMNS, 27 ROWS</div>
<div class="t r" style="right:3.5px">PREVIEW DOWNLOADED AT 12:03 AM</div>
<div class="a" style="left:0;top:0;width:1px;height:12px;background:#3a6d6b;z-index:60"></div><div class="a" style="right:0;top:0;width:1px;height:12px;background:#3a6d6b;z-index:60"></div><div class="a" style="left:0;bottom:0;width:850px;height:1px;background:#306e69;z-index:60"></div>
</div>
</body>
</html>
